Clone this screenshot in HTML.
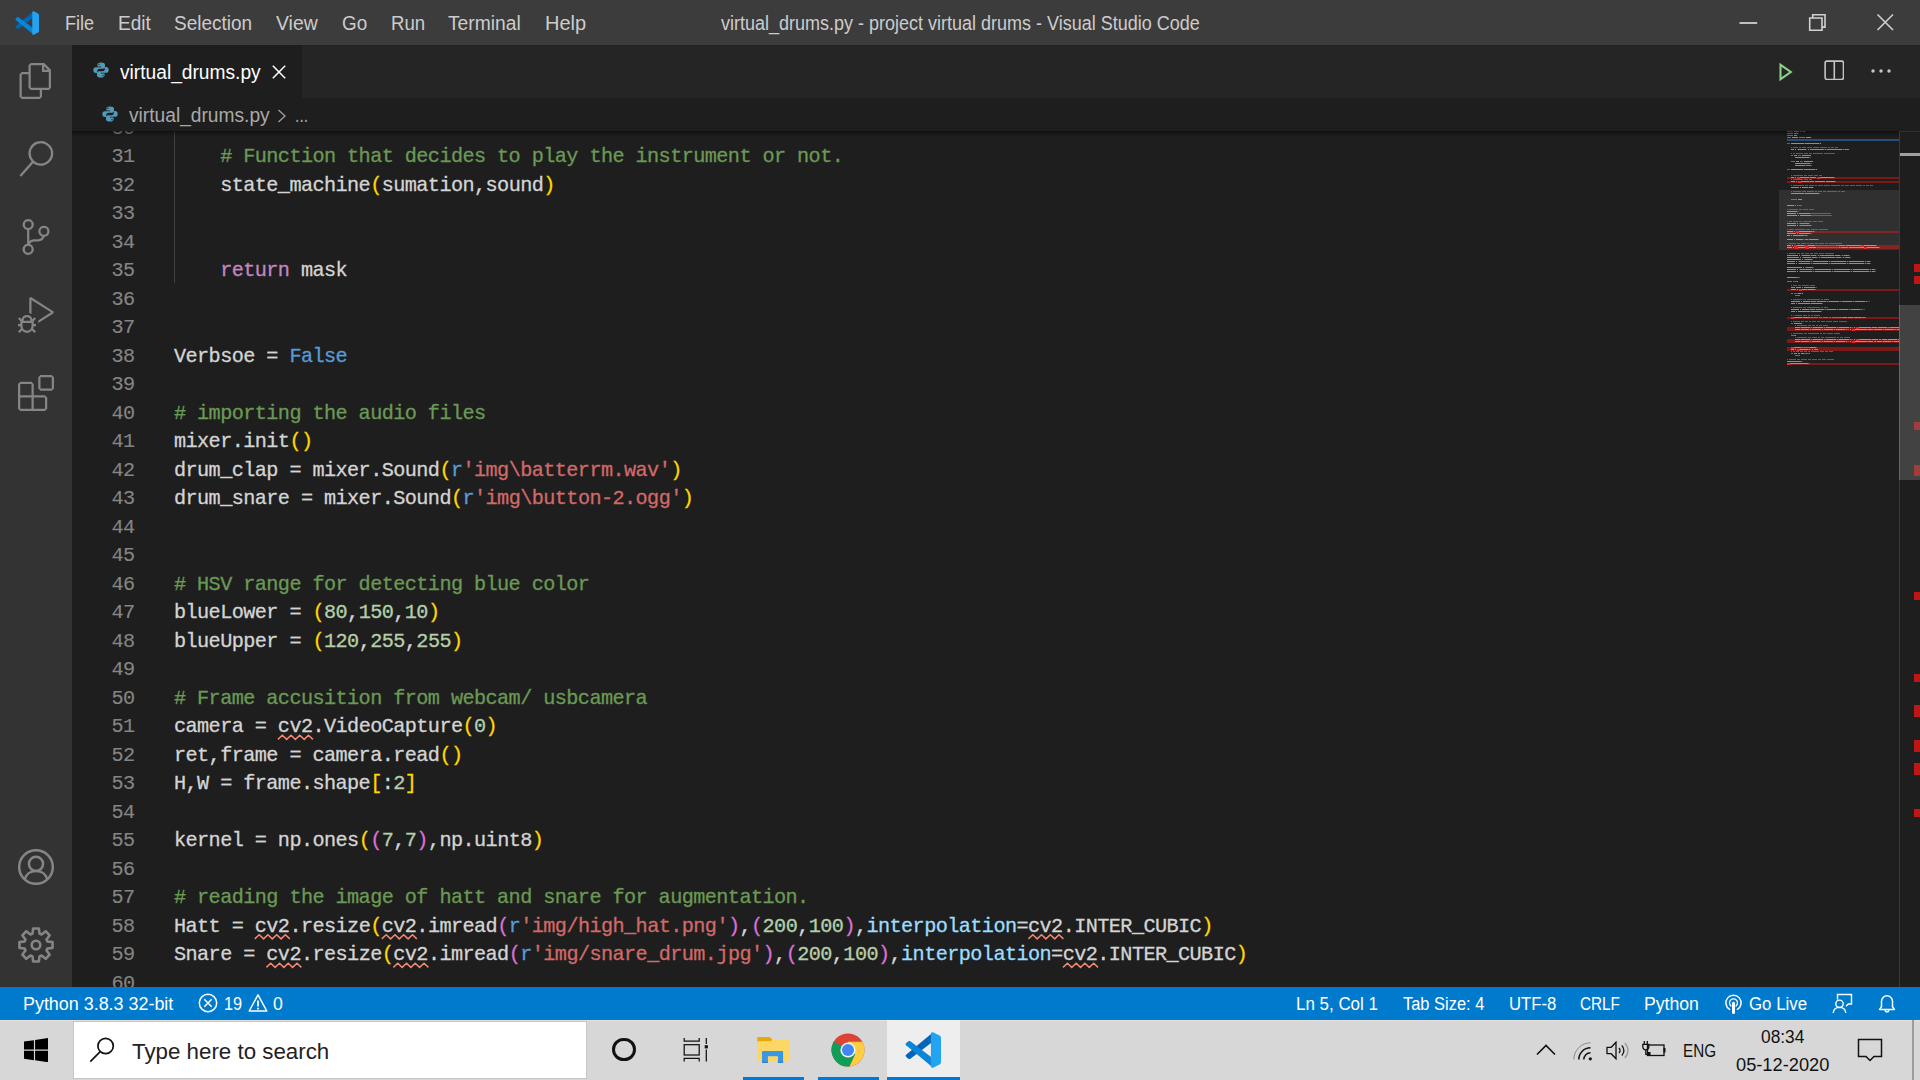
<!DOCTYPE html>
<html lang="en">
<head>
<meta charset="utf-8">
<title>virtual_drums.py - project virtual drums - Visual Studio Code</title>
<style>
*{box-sizing:border-box;margin:0;padding:0}
html,body{width:1920px;height:1080px;overflow:hidden;background:#1e1e1e}
body{position:relative;font-family:"Liberation Sans","DejaVu Sans",sans-serif;color:#ccc}
.abs{position:absolute}
.t{position:absolute;white-space:pre;line-height:1;transform-origin:0 0}
#titlebar{position:absolute;left:0;top:0;width:1920px;height:45px;background:#3c3c3c}
#activity{position:absolute;left:0;top:45px;width:72px;height:942px;background:#333}
#tabs{position:absolute;left:72px;top:45px;width:1848px;height:53px;background:#252526}
#tab{position:absolute;left:0;top:0;width:230px;height:53px;background:#1e1e1e}
#crumbs{position:absolute;left:72px;top:98px;width:1848px;height:33px;background:#1e1e1e}
#editor{position:absolute;left:72px;top:131px;width:1848px;height:856px;background:#1e1e1e;overflow:hidden}
#shadow{position:absolute;left:0;top:0;width:1827px;height:6px;box-shadow:#000 0 6px 6px -6px inset}
#status{position:absolute;left:0;top:987px;width:1920px;height:33px;background:#007acc;color:#fff}
#taskbar{position:absolute;left:0;top:1020px;width:1920px;height:60px;background:#d7d7d7;color:#000}
.ln{position:absolute;left:-72px;width:1860px;height:28.5px;line-height:28.5px;white-space:pre;
 font-family:"Liberation Mono","DejaVu Sans Mono",monospace;font-size:20.2px;letter-spacing:-0.576px;-webkit-text-stroke:0.3px;color:#d4d4d4}
.no{position:absolute;left:72px;width:62.5px;text-align:right;color:#858585;-webkit-text-stroke:0.12px}
.tx{position:absolute;left:174px}
.ai{position:absolute;left:18px;width:36px;height:36px;fill:#858585}
</style>
</head>
<body>
<!-- ================= TITLE BAR ================= -->
<div id="titlebar">
<svg class="abs" style="left:15px;top:11px" width="24" height="24" viewBox="0 0 100 100"><path d="M74 4 L3 63 Q0 66 3 69 L9 74 Q12 76 15 74 L76 28 Z" fill="#0066b8"/><path d="M74 96 L3 37 Q0 34 3 31 L9 26 Q12 24 15 26 L76 72 Z" fill="#0a84d8"/><path d="M72 3 Q74 0 78 1 L96 10 Q100 12 100 17 V83 Q100 88 96 90 L78 99 Q74 100 72 97 Z" fill="#23a4f0"/></svg><span class="t" style="left:64.8px;top:13.5px;font-size:19.5px;color:#cccccc;transform:scaleX(0.9255);">File</span><span class="t" style="left:118.1px;top:13.5px;font-size:19.5px;color:#cccccc;transform:scaleX(0.9754);">Edit</span><span class="t" style="left:174.4px;top:13.5px;font-size:19.5px;color:#cccccc;transform:scaleX(0.9746);">Selection</span><span class="t" style="left:276.4px;top:13.5px;font-size:19.5px;color:#cccccc;transform:scaleX(0.9943);">View</span><span class="t" style="left:341.9px;top:13.5px;font-size:19.5px;color:#cccccc;transform:scaleX(0.9680);">Go</span><span class="t" style="left:390.9px;top:13.5px;font-size:19.5px;color:#cccccc;transform:scaleX(0.9553);">Run</span><span class="t" style="left:448.4px;top:13.5px;font-size:19.5px;color:#cccccc;transform:scaleX(0.9864);">Terminal</span><span class="t" style="left:544.9px;top:13.5px;font-size:19.5px;color:#cccccc;transform:scaleX(1.0268);">Help</span><span class="t" style="left:720.5px;top:13.5px;font-size:19.5px;color:#cccccc;transform:scaleX(0.9227);">virtual_drums.py - project virtual drums - Visual Studio Code</span><svg class="abs" style="left:1720px;top:0" width="200" height="45" viewBox="0 0 200 45" fill="none" stroke="#d0d0d0" stroke-width="1.3"><path d="M19.500 23h17.700" stroke-width="1.800"/><path d="M89.700 18h12.300v12.300H89.700z M92.700 18v-3.200h12.300v12.300h-3" stroke-width="1.600"/><path d="M157.500 14.500l15.500 15.500M173 14.500l-15.500 15.500" stroke-width="1.6"/></svg>
</div>
<!-- ================= ACTIVITY BAR ================= -->
<div id="activity">
<svg class="ai" style="top:18px" viewBox="0 0 24 24"><path d="M17.500 0h-9L7 1.500V6H2.500L1 7.500v15.070L2.500 24h12.070L16 22.570V18h4.700l1.300-1.430V4.500L17.500 0zm0 2.120l2.380 2.380H17.500V2.120zm-3 20.380h-12v-15H7v9.070L8.500 18h6v4.500zm6-6h-12v-15H16V6h4.500v10.500z"/></svg><svg class="ai" style="top:96px" viewBox="0 0 24 24"><path d="M15.250 0a8.250 8.250 0 0 0-6.180 13.720L1 22.880l1.120 1 8.050-9.120A8.251 8.251 0 1 0 15.250.010V0zm0 15a6.750 6.750 0 1 1 0-13.500 6.750 6.750 0 0 1 0 13.500z"/></svg><svg class="ai" style="top:174px" viewBox="0 0 24 24"><path d="M21.007 8.222A3.738 3.738 0 0 0 15.045 5.200a3.737 3.737 0 0 0 1.156 6.583 2.988 2.988 0 0 1-2.668 1.670h-2.990a4.456 4.456 0 0 0-2.989 1.165V7.400a3.737 3.737 0 1 0-1.494 0v9.117a3.776 3.776 0 1 0 1.816.099 2.990 2.990 0 0 1 2.668-1.667h2.990a4.484 4.484 0 0 0 4.223-3.039 3.736 3.736 0 0 0 3.250-3.687zM4.565 3.738a2.242 2.242 0 1 1 4.484 0 2.242 2.242 0 0 1-4.484 0zm4.484 16.441a2.242 2.242 0 1 1-4.484 0 2.242 2.242 0 0 1 4.484 0zm8.221-9.715a2.242 2.242 0 1 1 0-4.485 2.242 2.242 0 0 1 0 4.485z"/></svg><svg class="ai" style="top:252px" viewBox="0 0 24 24"><path d="M10.940 13.500l-1.320 1.320a3.730 3.730 0 0 0-7.240 0L1.060 13.500 0 14.560l1.720 1.720-.22.220V18H0v1.500h1.500v.080c.077.489.214.966.410 1.420L0 22.940 1.060 24l1.650-1.650A4.308 4.308 0 0 0 6 24a4.310 4.310 0 0 0 3.290-1.650L10.940 24 12 22.940 10.090 21c.198-.464.336-.951.410-1.450v-.100H12V18h-1.500v-1.500l-.220-.220L12 14.560l-1.060-1.060zM6 13.500a2.250 2.250 0 0 1 2.250 2.250h-4.500A2.250 2.250 0 0 1 6 13.500zm3 6a3.330 3.330 0 0 1-3 3 3.330 3.330 0 0 1-3-3v-2.250h6v2.250zm14.760-9.900v1.260L13.500 17.370V15.600l8.500-5.370L9 2v9.460a5.070 5.070 0 0 0-1.500-.720V.630L8.640 0l15.120 9.600z"/></svg><svg class="ai" style="top:330px" viewBox="0 0 24 24"><path d="M13.500 1.500L15 0h7.500L24 1.500V9l-1.500 1.500H15L13.500 9V1.500zm1.500 0V9h7.500V1.500H15zM0 15V6l1.500-1.500H9L10.500 6v7.500H18l1.500 1.500v7.500L18 24H1.500L0 22.500V15zm9-1.500V6H1.500v7.500H9zM9 15H1.500v7.500H9V15zm1.500 7.500H18V15h-7.500v7.500z"/></svg><svg class="ai" style="top:804px;fill:none" viewBox="0 0 36 36" stroke="#858585" stroke-width="2.500"><circle cx="18" cy="18" r="16.800"/><circle cx="18" cy="14.800" r="7.100"/><path d="M6.600 30.300c1.400-5.200 5.900-8.400 11.400-8.400s10 3.200 11.400 8.400"/></svg><svg class="ai" style="top:882px;fill:none" viewBox="0 0 36 36" stroke="#858585" stroke-width="2.600" stroke-linejoin="round"><path d="M14.48 6.63 L15.16 1.44 L20.84 1.44 L21.52 6.63 L23.55 7.47 L27.70 4.28 L31.72 8.30 L28.53 12.45 L29.37 14.48 L34.56 15.16 L34.56 20.84 L29.37 21.52 L28.53 23.55 L31.72 27.70 L27.70 31.72 L23.55 28.53 L21.52 29.37 L20.84 34.56 L15.16 34.56 L14.48 29.37 L12.45 28.53 L8.30 31.72 L4.28 27.70 L7.47 23.55 L6.63 21.52 L1.44 20.84 L1.44 15.16 L6.63 14.48 L7.47 12.45 L4.28 8.30 L8.30 4.28 L12.45 7.47 Z"/><circle cx="18" cy="18" r="4.300"/></svg>
</div>
<!-- ================= TABS ================= -->
<div id="tabs">
<div id="tab"></div>
<svg class="abs" style="left:20.799999999999997px;top:16.5px" width="16" height="16" viewBox="0 0 16 16"><g fill="#519aba"><path d="M7.9.4C5.6.4 4.4 1.1 4.4 2.7v1.9h3.7v.6H2.9C1.2 5.2.3 6.3.3 8.1s.9 2.9 2.6 2.9h1.3V9c0-1.3 1.100-2.300 2.400-2.300h3.500c1.100 0 1.900-.9 1.900-2V2.700C12 1.100 10.600.4 7.900.4zM6 1.600a.7.7 0 110 1.400.7.7 0 010-1.400z"/><path d="M8.100 15.600c2.300 0 3.500-.7 3.500-2.300v-1.900H7.900v-.6h5.200c1.700 0 2.600-1.100 2.600-2.900s-.9-2.900-2.600-2.900h-1.300V7c0 1.300-1.100 2.300-2.400 2.300H5.900C4.800 9.300 4 10.200 4 11.300v2c0 1.600 1.400 2.300 4.100 2.300zm1.900-1.200a.7.7 0 110-1.400.7.7 0 010 1.400z"/></g></svg><span class="t" style="left:47.7px;top:17.5px;font-size:19.5px;color:#ffffff;transform:scaleX(0.9834);">virtual_drums.py</span><svg class="abs" style="left:200.3px;top:19.700000000000003px" width="14" height="14" viewBox="0 0 14 14" stroke="#fff" stroke-width="1.500" fill="none"><path d="M.8.8l12.400 12.400M13.200.8L.8 13.200"/></svg><svg class="abs" style="left:1705.7px;top:17px" width="18" height="20" viewBox="0 0 18 20" fill="none" stroke="#89d185" stroke-width="2.100" stroke-linejoin="miter"><path d="M2.500 2.800v14.400l10.300-7.200z"/></svg><svg class="abs" style="left:1751.5px;top:14.799999999999997px" width="20.600" height="20.600" viewBox="0 0 22 22" fill="none" stroke="#c5c5c5" stroke-width="1.700"><rect x="1.200" y="1.200" width="19.600" height="19.600" rx="2"/><path d="M11 1.200v19.600"/></svg><svg class="abs" style="left:1798px;top:23px" width="22" height="6" viewBox="0 0 22 6" fill="#c5c5c5"><circle cx="3" cy="3" r="1.700"/><circle cx="11" cy="3" r="1.700"/><circle cx="19" cy="3" r="1.700"/></svg>
</div>
<div id="crumbs">
<svg class="abs" style="left:29.700000000000003px;top:7.700000000000003px" width="16" height="16" viewBox="0 0 16 16"><g fill="#519aba"><path d="M7.9.4C5.6.4 4.4 1.1 4.4 2.7v1.9h3.7v.6H2.9C1.2 5.2.3 6.3.3 8.1s.9 2.9 2.6 2.9h1.3V9c0-1.3 1.100-2.300 2.400-2.300h3.500c1.100 0 1.900-.9 1.900-2V2.700C12 1.100 10.600.4 7.900.4zM6 1.600a.7.7 0 110 1.400.7.7 0 010-1.400z"/><path d="M8.100 15.600c2.300 0 3.500-.7 3.500-2.300v-1.900H7.900v-.6h5.200c1.700 0 2.600-1.100 2.600-2.900s-.9-2.900-2.600-2.900h-1.300V7c0 1.300-1.100 2.300-2.400 2.300H5.900C4.800 9.300 4 10.200 4 11.300v2c0 1.600 1.400 2.300 4.100 2.300zm1.900-1.200a.7.7 0 110-1.400.7.7 0 010 1.400z"/></g></svg><span class="t" style="left:56.6px;top:7.9px;font-size:19.5px;color:#a9a9a9;transform:scaleX(0.9834);">virtual_drums.py</span><svg class="abs" style="left:205.2px;top:10.700000000000003px" width="10" height="14" viewBox="0 0 10 14" fill="none" stroke="#a0a0a0" stroke-width="1.300"><path d="M1.500 1l6.500 6-6.500 6"/></svg><span class="t" style="left:222.5px;top:7.9px;font-size:19.5px;color:#a9a9a9;transform:scaleX(0.8105);">...</span>
</div>
<!-- ================= EDITOR ================= -->
<div id="editor">
<div class="abs" style="left:102px;top:0;width:1px;height:152px;background:#404040"></div>
<div id="code" class="abs" style="left:0;top:-131px;width:1780px;height:1080px">
<div class="ln" style="top:114.85px"><span class="no">30</span><span class="tx"></span></div>
<div class="ln" style="top:143.35px"><span class="no">31</span><span class="tx">    <span style="color:#6a9955"># Function that decides to play the instrument or not.</span></span></div>
<div class="ln" style="top:171.85px"><span class="no">32</span><span class="tx">    state_machine<span style="color:#ffd700">(</span>sumation,sound<span style="color:#ffd700">)</span></span></div>
<div class="ln" style="top:200.35px"><span class="no">33</span><span class="tx"></span></div>
<div class="ln" style="top:228.85px"><span class="no">34</span><span class="tx"></span></div>
<div class="ln" style="top:257.35px"><span class="no">35</span><span class="tx">    <span style="color:#c586c0">return</span> mask</span></div>
<div class="ln" style="top:285.85px"><span class="no">36</span><span class="tx"></span></div>
<div class="ln" style="top:314.35px"><span class="no">37</span><span class="tx"></span></div>
<div class="ln" style="top:342.85px"><span class="no">38</span><span class="tx">Verbsoe = <span style="color:#569cd6">False</span></span></div>
<div class="ln" style="top:371.35px"><span class="no">39</span><span class="tx"></span></div>
<div class="ln" style="top:399.85px"><span class="no">40</span><span class="tx"><span style="color:#6a9955"># importing the audio files</span></span></div>
<div class="ln" style="top:428.35px"><span class="no">41</span><span class="tx">mixer.init<span style="color:#ffd700">()</span></span></div>
<div class="ln" style="top:456.85px"><span class="no">42</span><span class="tx">drum_clap = mixer.Sound<span style="color:#ffd700">(</span><span style="color:#569cd6">r</span><span style="color:#d16969">'img\batterrm.wav'</span><span style="color:#ffd700">)</span></span></div>
<div class="ln" style="top:485.35px"><span class="no">43</span><span class="tx">drum_snare = mixer.Sound<span style="color:#ffd700">(</span><span style="color:#569cd6">r</span><span style="color:#d16969">'img\button-2.ogg'</span><span style="color:#ffd700">)</span></span></div>
<div class="ln" style="top:513.85px"><span class="no">44</span><span class="tx"></span></div>
<div class="ln" style="top:542.35px"><span class="no">45</span><span class="tx"></span></div>
<div class="ln" style="top:570.85px"><span class="no">46</span><span class="tx"><span style="color:#6a9955"># HSV range for detecting blue color</span></span></div>
<div class="ln" style="top:599.35px"><span class="no">47</span><span class="tx">blueLower = <span style="color:#ffd700">(</span><span style="color:#b5cea8">80</span>,<span style="color:#b5cea8">150</span>,<span style="color:#b5cea8">10</span><span style="color:#ffd700">)</span></span></div>
<div class="ln" style="top:627.85px"><span class="no">48</span><span class="tx">blueUpper = <span style="color:#ffd700">(</span><span style="color:#b5cea8">120</span>,<span style="color:#b5cea8">255</span>,<span style="color:#b5cea8">255</span><span style="color:#ffd700">)</span></span></div>
<div class="ln" style="top:656.35px"><span class="no">49</span><span class="tx"></span></div>
<div class="ln" style="top:684.85px"><span class="no">50</span><span class="tx"><span style="color:#6a9955"># Frame accusition from webcam/ usbcamera</span></span></div>
<div class="ln" style="top:713.35px"><span class="no">51</span><span class="tx">camera = <span class="er" style="color:#d4d4d4">cv2</span>.VideoCapture<span style="color:#ffd700">(</span><span style="color:#b5cea8">0</span><span style="color:#ffd700">)</span></span></div>
<div class="ln" style="top:741.85px"><span class="no">52</span><span class="tx">ret,frame = camera.read<span style="color:#ffd700">()</span></span></div>
<div class="ln" style="top:770.35px"><span class="no">53</span><span class="tx">H,W = frame.shape<span style="color:#ffd700">[</span>:<span style="color:#b5cea8">2</span><span style="color:#ffd700">]</span></span></div>
<div class="ln" style="top:798.85px"><span class="no">54</span><span class="tx"></span></div>
<div class="ln" style="top:827.35px"><span class="no">55</span><span class="tx">kernel = np.ones<span style="color:#ffd700">(</span><span style="color:#da70d6">(</span><span style="color:#b5cea8">7</span>,<span style="color:#b5cea8">7</span><span style="color:#da70d6">)</span>,np.uint8<span style="color:#ffd700">)</span></span></div>
<div class="ln" style="top:855.85px"><span class="no">56</span><span class="tx"></span></div>
<div class="ln" style="top:884.35px"><span class="no">57</span><span class="tx"><span style="color:#6a9955"># reading the image of hatt and snare for augmentation.</span></span></div>
<div class="ln" style="top:912.85px"><span class="no">58</span><span class="tx">Hatt = <span class="er" style="color:#d4d4d4">cv2</span>.resize<span style="color:#ffd700">(</span><span class="er" style="color:#d4d4d4">cv2</span>.imread<span style="color:#da70d6">(</span><span style="color:#569cd6">r</span><span style="color:#d16969">'img/high_hat.png'</span><span style="color:#da70d6">)</span>,<span style="color:#da70d6">(</span><span style="color:#b5cea8">200</span>,<span style="color:#b5cea8">100</span><span style="color:#da70d6">)</span>,<span style="color:#9cdcfe">interpolation</span>=<span class="er" style="color:#d4d4d4">cv2</span>.INTER_CUBIC<span style="color:#ffd700">)</span></span></div>
<div class="ln" style="top:941.35px"><span class="no">59</span><span class="tx">Snare = <span class="er" style="color:#d4d4d4">cv2</span>.resize<span style="color:#ffd700">(</span><span class="er" style="color:#d4d4d4">cv2</span>.imread<span style="color:#da70d6">(</span><span style="color:#569cd6">r</span><span style="color:#d16969">'img/snare_drum.jpg'</span><span style="color:#da70d6">)</span>,<span style="color:#da70d6">(</span><span style="color:#b5cea8">200</span>,<span style="color:#b5cea8">100</span><span style="color:#da70d6">)</span>,<span style="color:#9cdcfe">interpolation</span>=<span class="er" style="color:#d4d4d4">cv2</span>.INTER_CUBIC<span style="color:#ffd700">)</span></span></div>
<div class="ln" style="top:969.85px"><span class="no">60</span><span class="tx"></span></div>
<svg class="abs" style="left:-72px;top:0" width="1780" height="1080" viewBox="0 0 1780 1080" fill="none" stroke="#f48771" stroke-width="1.500" stroke-linejoin="miter"><path d="M277.9 739.4 L282.3 735.2 L286.7 739.4 L291.0 735.2 L295.4 739.4 L299.8 735.2 L304.2 739.4 L308.5 735.2 L312.9 739.4"/><path d="M254.8 938.9 L259.2 934.7 L263.6 938.9 L267.9 934.7 L272.3 938.9 L276.7 934.7 L281.1 938.9 L285.4 934.7 L289.8 938.9"/><path d="M381.8 938.9 L386.2 934.7 L390.6 938.9 L395.0 934.7 L399.3 938.9 L403.7 934.7 L408.1 938.9 L412.5 934.7 L416.8 938.9"/><path d="M1028.4 938.9 L1032.8 934.7 L1037.2 938.9 L1041.5 934.7 L1045.9 938.9 L1050.3 934.7 L1054.7 938.9 L1059.0 934.7 L1063.4 938.9"/><path d="M266.4 967.4 L270.7 963.2 L275.1 967.4 L279.5 963.2 L283.9 967.4 L288.2 963.2 L292.6 967.4 L297.0 963.2 L301.4 967.4"/><path d="M393.4 967.4 L397.7 963.2 L402.1 967.4 L406.5 963.2 L410.9 967.4 L415.2 963.2 L419.6 967.4 L424.0 963.2 L428.4 967.4"/><path d="M1063.0 967.4 L1067.4 963.2 L1071.8 967.4 L1076.2 963.2 L1080.5 967.4 L1084.9 963.2 L1089.3 967.4 L1093.7 963.2 L1098.0 967.4"/></svg>
</div>
<!-- minimap -->
<svg class="abs" style="left:1707px;top:0" width="120" height="856" viewBox="0 0 120 856" shape-rendering="crispEdges">
<rect x="0" y="59" width="120" height="60" fill="#797979" fill-opacity=".2"/>
<rect x="8" y="7.5" width="112" height="2" fill="#264f78"/>
<rect x="8" y="-0.3" width="6" height="1.6" fill="#c586c0" fill-opacity=".62"/>
<rect x="15" y="-0.3" width="5" height="1.6" fill="#d4d4d4" fill-opacity=".62"/>
<rect x="21" y="-0.3" width="2" height="1.6" fill="#c586c0" fill-opacity=".62"/>
<rect x="24" y="-0.3" width="2" height="1.6" fill="#d4d4d4" fill-opacity=".62"/>
<rect x="8" y="1.7" width="6" height="1.6" fill="#c586c0" fill-opacity=".62"/>
<rect x="15" y="1.7" width="4" height="1.6" fill="#d4d4d4" fill-opacity=".62"/>
<rect x="8" y="3.7" width="6" height="1.6" fill="#c586c0" fill-opacity=".62"/>
<rect x="15" y="3.7" width="3" height="1.6" fill="#d4d4d4" fill-opacity=".62"/>
<rect x="8" y="5.7" width="4" height="1.6" fill="#c586c0" fill-opacity=".62"/>
<rect x="13" y="5.7" width="6" height="1.6" fill="#d4d4d4" fill-opacity=".62"/>
<rect x="20" y="5.7" width="6" height="1.6" fill="#c586c0" fill-opacity=".62"/>
<rect x="27" y="5.7" width="5" height="1.6" fill="#d4d4d4" fill-opacity=".62"/>
<rect x="8" y="11.7" width="3" height="1.6" fill="#569cd6" fill-opacity=".62"/>
<rect x="12" y="11.7" width="13" height="1.6" fill="#dcdcaa" fill-opacity=".62"/>
<rect x="25" y="11.7" width="1" height="1.6" fill="#ffd700" fill-opacity=".3"/>
<rect x="26" y="11.7" width="8" height="1.6" fill="#9cdcfe" fill-opacity=".62"/>
<rect x="34" y="11.7" width="1" height="1.6" fill="#d4d4d4" fill-opacity=".62"/>
<rect x="35" y="11.7" width="5" height="1.6" fill="#9cdcfe" fill-opacity=".62"/>
<rect x="40" y="11.7" width="1" height="1.6" fill="#ffd700" fill-opacity=".3"/>
<rect x="41" y="11.7" width="1" height="1.6" fill="#d4d4d4" fill-opacity=".62"/>
<rect x="12" y="15.7" width="1" height="1.6" fill="#6a9955" fill-opacity=".62"/>
<rect x="14" y="15.7" width="5" height="1.6" fill="#6a9955" fill-opacity=".62"/>
<rect x="20" y="15.7" width="2" height="1.6" fill="#6a9955" fill-opacity=".62"/>
<rect x="23" y="15.7" width="4" height="1.6" fill="#6a9955" fill-opacity=".62"/>
<rect x="28" y="15.7" width="5" height="1.6" fill="#6a9955" fill-opacity=".62"/>
<rect x="34" y="15.7" width="6" height="1.6" fill="#6a9955" fill-opacity=".62"/>
<rect x="41" y="15.7" width="7" height="1.6" fill="#6a9955" fill-opacity=".62"/>
<rect x="49" y="15.7" width="2" height="1.6" fill="#6a9955" fill-opacity=".62"/>
<rect x="52" y="15.7" width="3" height="1.6" fill="#6a9955" fill-opacity=".62"/>
<rect x="56" y="15.7" width="3" height="1.6" fill="#6a9955" fill-opacity=".62"/>
<rect x="12" y="17.7" width="3" height="1.6" fill="#d4d4d4" fill-opacity=".62"/>
<rect x="16" y="17.7" width="1" height="1.6" fill="#d4d4d4" fill-opacity=".62"/>
<rect x="18" y="17.7" width="1" height="1.6" fill="#ffd700" fill-opacity=".3"/>
<rect x="19" y="17.7" width="8" height="1.6" fill="#d4d4d4" fill-opacity=".62"/>
<rect x="27" y="17.7" width="1" height="1.6" fill="#ffd700" fill-opacity=".3"/>
<rect x="29" y="17.7" width="1" height="1.6" fill="#d4d4d4" fill-opacity=".62"/>
<rect x="31" y="17.7" width="14" height="1.6" fill="#d4d4d4" fill-opacity=".62"/>
<rect x="45" y="17.7" width="1" height="1.6" fill="#ffd700" fill-opacity=".3"/>
<rect x="46" y="17.7" width="1" height="1.6" fill="#b5cea8" fill-opacity=".62"/>
<rect x="47" y="17.7" width="1" height="1.6" fill="#ffd700" fill-opacity=".3"/>
<rect x="48" y="17.7" width="15" height="1.6" fill="#d4d4d4" fill-opacity=".62"/>
<rect x="63" y="17.7" width="1" height="1.6" fill="#ffd700" fill-opacity=".3"/>
<rect x="64" y="17.7" width="1" height="1.6" fill="#b5cea8" fill-opacity=".62"/>
<rect x="65" y="17.7" width="1" height="1.6" fill="#ffd700" fill-opacity=".3"/>
<rect x="66" y="17.7" width="1" height="1.6" fill="#d4d4d4" fill-opacity=".62"/>
<rect x="67" y="17.7" width="3" height="1.6" fill="#b5cea8" fill-opacity=".62"/>
<rect x="12" y="21.7" width="1" height="1.6" fill="#6a9955" fill-opacity=".62"/>
<rect x="14" y="21.7" width="2" height="1.6" fill="#6a9955" fill-opacity=".62"/>
<rect x="17" y="21.7" width="7" height="1.6" fill="#6a9955" fill-opacity=".62"/>
<rect x="25" y="21.7" width="4" height="1.6" fill="#6a9955" fill-opacity=".62"/>
<rect x="30" y="21.7" width="3" height="1.6" fill="#6a9955" fill-opacity=".62"/>
<rect x="34" y="21.7" width="10" height="1.6" fill="#6a9955" fill-opacity=".62"/>
<rect x="45" y="21.7" width="11" height="1.6" fill="#6a9955" fill-opacity=".62"/>
<rect x="12" y="23.7" width="2" height="1.6" fill="#c586c0" fill-opacity=".62"/>
<rect x="15" y="23.7" width="3" height="1.6" fill="#d4d4d4" fill-opacity=".62"/>
<rect x="19" y="23.7" width="3" height="1.6" fill="#569cd6" fill-opacity=".62"/>
<rect x="23" y="23.7" width="7" height="1.6" fill="#d4d4d4" fill-opacity=".62"/>
<rect x="30" y="23.7" width="1" height="1.6" fill="#b5cea8" fill-opacity=".62"/>
<rect x="31" y="23.7" width="1" height="1.6" fill="#d4d4d4" fill-opacity=".62"/>
<rect x="16" y="25.7" width="14" height="1.6" fill="#d4d4d4" fill-opacity=".62"/>
<rect x="30" y="25.7" width="2" height="1.6" fill="#ffd700" fill-opacity=".3"/>
<rect x="12" y="29.7" width="4" height="1.6" fill="#c586c0" fill-opacity=".62"/>
<rect x="17" y="29.7" width="3" height="1.6" fill="#d4d4d4" fill-opacity=".62"/>
<rect x="21" y="29.7" width="3" height="1.6" fill="#569cd6" fill-opacity=".62"/>
<rect x="25" y="29.7" width="7" height="1.6" fill="#d4d4d4" fill-opacity=".62"/>
<rect x="32" y="29.7" width="1" height="1.6" fill="#b5cea8" fill-opacity=".62"/>
<rect x="33" y="29.7" width="1" height="1.6" fill="#d4d4d4" fill-opacity=".62"/>
<rect x="16" y="31.7" width="15" height="1.6" fill="#d4d4d4" fill-opacity=".62"/>
<rect x="31" y="31.7" width="2" height="1.6" fill="#ffd700" fill-opacity=".3"/>
<rect x="16" y="33.7" width="10" height="1.6" fill="#d4d4d4" fill-opacity=".62"/>
<rect x="26" y="33.7" width="1" height="1.6" fill="#ffd700" fill-opacity=".3"/>
<rect x="27" y="33.7" width="5" height="1.6" fill="#b5cea8" fill-opacity=".62"/>
<rect x="32" y="33.7" width="1" height="1.6" fill="#ffd700" fill-opacity=".3"/>
<rect x="8" y="37.7" width="3" height="1.6" fill="#569cd6" fill-opacity=".62"/>
<rect x="12" y="37.7" width="12" height="1.6" fill="#dcdcaa" fill-opacity=".62"/>
<rect x="24" y="37.7" width="1" height="1.6" fill="#ffd700" fill-opacity=".3"/>
<rect x="25" y="37.7" width="5" height="1.6" fill="#9cdcfe" fill-opacity=".62"/>
<rect x="30" y="37.7" width="1" height="1.6" fill="#d4d4d4" fill-opacity=".62"/>
<rect x="31" y="37.7" width="5" height="1.6" fill="#9cdcfe" fill-opacity=".62"/>
<rect x="36" y="37.7" width="1" height="1.6" fill="#ffd700" fill-opacity=".3"/>
<rect x="37" y="37.7" width="1" height="1.6" fill="#d4d4d4" fill-opacity=".62"/>
<rect x="12" y="43.7" width="1" height="1.6" fill="#6a9955" fill-opacity=".62"/>
<rect x="14" y="43.7" width="10" height="1.6" fill="#6a9955" fill-opacity=".62"/>
<rect x="25" y="43.7" width="3" height="1.6" fill="#6a9955" fill-opacity=".62"/>
<rect x="29" y="43.7" width="5" height="1.6" fill="#6a9955" fill-opacity=".62"/>
<rect x="35" y="43.7" width="4" height="1.6" fill="#6a9955" fill-opacity=".62"/>
<rect x="40" y="43.7" width="3" height="1.6" fill="#6a9955" fill-opacity=".62"/>
<rect x="8" y="45.5" width="112" height="2" fill="#ff1212" fill-opacity=".42"/>
<rect x="12" y="45.7" width="3" height="1.6" fill="#d4d4d4" fill-opacity=".62"/>
<rect x="16" y="45.7" width="1" height="1.6" fill="#d4d4d4" fill-opacity=".62"/>
<rect x="18" y="45.5" width="3" height="2" fill="#ff1e1e"/>
<rect x="21" y="45.7" width="9" height="1.6" fill="#d4d4d4" fill-opacity=".62"/>
<rect x="30" y="45.7" width="1" height="1.6" fill="#ffd700" fill-opacity=".3"/>
<rect x="31" y="45.7" width="6" height="1.6" fill="#d4d4d4" fill-opacity=".62"/>
<rect x="38" y="45.5" width="3" height="2" fill="#ff1e1e"/>
<rect x="41" y="45.7" width="14" height="1.6" fill="#d4d4d4" fill-opacity=".62"/>
<rect x="55" y="45.7" width="1" height="1.6" fill="#ffd700" fill-opacity=".3"/>
<rect x="12" y="47.7" width="1" height="1.6" fill="#6a9955" fill-opacity=".62"/>
<rect x="14" y="47.7" width="10" height="1.6" fill="#6a9955" fill-opacity=".62"/>
<rect x="25" y="47.7" width="4" height="1.6" fill="#6a9955" fill-opacity=".62"/>
<rect x="30" y="47.7" width="3" height="1.6" fill="#6a9955" fill-opacity=".62"/>
<rect x="8" y="49.5" width="112" height="2" fill="#ff1212" fill-opacity=".42"/>
<rect x="12" y="49.7" width="4" height="1.6" fill="#d4d4d4" fill-opacity=".62"/>
<rect x="17" y="49.7" width="1" height="1.6" fill="#d4d4d4" fill-opacity=".62"/>
<rect x="19" y="49.5" width="3" height="2" fill="#ff1e1e"/>
<rect x="22" y="49.7" width="8" height="1.6" fill="#d4d4d4" fill-opacity=".62"/>
<rect x="30" y="49.7" width="1" height="1.6" fill="#ffd700" fill-opacity=".3"/>
<rect x="31" y="49.7" width="4" height="1.6" fill="#d4d4d4" fill-opacity=".62"/>
<rect x="36" y="49.7" width="10" height="1.6" fill="#d4d4d4" fill-opacity=".62"/>
<rect x="47" y="49.7" width="9" height="1.6" fill="#d4d4d4" fill-opacity=".62"/>
<rect x="56" y="49.7" width="1" height="1.6" fill="#ffd700" fill-opacity=".3"/>
<rect x="12" y="53.7" width="1" height="1.6" fill="#6a9955" fill-opacity=".62"/>
<rect x="14" y="53.7" width="11" height="1.6" fill="#6a9955" fill-opacity=".62"/>
<rect x="26" y="53.7" width="3" height="1.6" fill="#6a9955" fill-opacity=".62"/>
<rect x="30" y="53.7" width="5" height="1.6" fill="#6a9955" fill-opacity=".62"/>
<rect x="36" y="53.7" width="2" height="1.6" fill="#6a9955" fill-opacity=".62"/>
<rect x="39" y="53.7" width="5" height="1.6" fill="#6a9955" fill-opacity=".62"/>
<rect x="45" y="53.7" width="6" height="1.6" fill="#6a9955" fill-opacity=".62"/>
<rect x="52" y="53.7" width="9" height="1.6" fill="#6a9955" fill-opacity=".62"/>
<rect x="62" y="53.7" width="3" height="1.6" fill="#6a9955" fill-opacity=".62"/>
<rect x="66" y="53.7" width="4" height="1.6" fill="#6a9955" fill-opacity=".62"/>
<rect x="71" y="53.7" width="5" height="1.6" fill="#6a9955" fill-opacity=".62"/>
<rect x="77" y="53.7" width="6" height="1.6" fill="#6a9955" fill-opacity=".62"/>
<rect x="84" y="53.7" width="2" height="1.6" fill="#6a9955" fill-opacity=".62"/>
<rect x="87" y="53.7" width="3" height="1.6" fill="#6a9955" fill-opacity=".62"/>
<rect x="91" y="53.7" width="3" height="1.6" fill="#6a9955" fill-opacity=".62"/>
<rect x="12" y="55.7" width="8" height="1.6" fill="#d4d4d4" fill-opacity=".62"/>
<rect x="21" y="55.7" width="1" height="1.6" fill="#d4d4d4" fill-opacity=".62"/>
<rect x="23" y="55.7" width="6" height="1.6" fill="#d4d4d4" fill-opacity=".62"/>
<rect x="29" y="55.7" width="1" height="1.6" fill="#ffd700" fill-opacity=".3"/>
<rect x="30" y="55.7" width="4" height="1.6" fill="#d4d4d4" fill-opacity=".62"/>
<rect x="34" y="55.7" width="1" height="1.6" fill="#ffd700" fill-opacity=".3"/>
<rect x="12" y="59.7" width="1" height="1.6" fill="#6a9955" fill-opacity=".62"/>
<rect x="14" y="59.7" width="8" height="1.6" fill="#6a9955" fill-opacity=".62"/>
<rect x="23" y="59.7" width="4" height="1.6" fill="#6a9955" fill-opacity=".62"/>
<rect x="28" y="59.7" width="7" height="1.6" fill="#6a9955" fill-opacity=".62"/>
<rect x="36" y="59.7" width="2" height="1.6" fill="#6a9955" fill-opacity=".62"/>
<rect x="39" y="59.7" width="4" height="1.6" fill="#6a9955" fill-opacity=".62"/>
<rect x="44" y="59.7" width="3" height="1.6" fill="#6a9955" fill-opacity=".62"/>
<rect x="48" y="59.7" width="10" height="1.6" fill="#6a9955" fill-opacity=".62"/>
<rect x="59" y="59.7" width="2" height="1.6" fill="#6a9955" fill-opacity=".62"/>
<rect x="62" y="59.7" width="4" height="1.6" fill="#6a9955" fill-opacity=".62"/>
<rect x="12" y="61.7" width="13" height="1.6" fill="#d4d4d4" fill-opacity=".62"/>
<rect x="25" y="61.7" width="1" height="1.6" fill="#ffd700" fill-opacity=".3"/>
<rect x="26" y="61.7" width="14" height="1.6" fill="#d4d4d4" fill-opacity=".62"/>
<rect x="40" y="61.7" width="1" height="1.6" fill="#ffd700" fill-opacity=".3"/>
<rect x="12" y="67.7" width="6" height="1.6" fill="#c586c0" fill-opacity=".62"/>
<rect x="19" y="67.7" width="4" height="1.6" fill="#d4d4d4" fill-opacity=".62"/>
<rect x="8" y="73.7" width="7" height="1.6" fill="#d4d4d4" fill-opacity=".62"/>
<rect x="16" y="73.7" width="1" height="1.6" fill="#d4d4d4" fill-opacity=".62"/>
<rect x="18" y="73.7" width="5" height="1.6" fill="#569cd6" fill-opacity=".62"/>
<rect x="8" y="77.7" width="1" height="1.6" fill="#6a9955" fill-opacity=".62"/>
<rect x="10" y="77.7" width="9" height="1.6" fill="#6a9955" fill-opacity=".62"/>
<rect x="20" y="77.7" width="3" height="1.6" fill="#6a9955" fill-opacity=".62"/>
<rect x="24" y="77.7" width="5" height="1.6" fill="#6a9955" fill-opacity=".62"/>
<rect x="30" y="77.7" width="5" height="1.6" fill="#6a9955" fill-opacity=".62"/>
<rect x="8" y="79.7" width="10" height="1.6" fill="#d4d4d4" fill-opacity=".62"/>
<rect x="18" y="79.7" width="2" height="1.6" fill="#ffd700" fill-opacity=".3"/>
<rect x="8" y="81.7" width="9" height="1.6" fill="#d4d4d4" fill-opacity=".62"/>
<rect x="18" y="81.7" width="1" height="1.6" fill="#d4d4d4" fill-opacity=".62"/>
<rect x="20" y="81.7" width="11" height="1.6" fill="#d4d4d4" fill-opacity=".62"/>
<rect x="31" y="81.7" width="1" height="1.6" fill="#ffd700" fill-opacity=".3"/>
<rect x="32" y="81.7" width="1" height="1.6" fill="#569cd6" fill-opacity=".62"/>
<rect x="33" y="81.7" width="18" height="1.6" fill="#d16969" fill-opacity=".62"/>
<rect x="51" y="81.7" width="1" height="1.6" fill="#ffd700" fill-opacity=".3"/>
<rect x="8" y="83.7" width="10" height="1.6" fill="#d4d4d4" fill-opacity=".62"/>
<rect x="19" y="83.7" width="1" height="1.6" fill="#d4d4d4" fill-opacity=".62"/>
<rect x="21" y="83.7" width="11" height="1.6" fill="#d4d4d4" fill-opacity=".62"/>
<rect x="32" y="83.7" width="1" height="1.6" fill="#ffd700" fill-opacity=".3"/>
<rect x="33" y="83.7" width="1" height="1.6" fill="#569cd6" fill-opacity=".62"/>
<rect x="34" y="83.7" width="18" height="1.6" fill="#d16969" fill-opacity=".62"/>
<rect x="52" y="83.7" width="1" height="1.6" fill="#ffd700" fill-opacity=".3"/>
<rect x="8" y="89.7" width="1" height="1.6" fill="#6a9955" fill-opacity=".62"/>
<rect x="10" y="89.7" width="3" height="1.6" fill="#6a9955" fill-opacity=".62"/>
<rect x="14" y="89.7" width="5" height="1.6" fill="#6a9955" fill-opacity=".62"/>
<rect x="20" y="89.7" width="3" height="1.6" fill="#6a9955" fill-opacity=".62"/>
<rect x="24" y="89.7" width="9" height="1.6" fill="#6a9955" fill-opacity=".62"/>
<rect x="34" y="89.7" width="4" height="1.6" fill="#6a9955" fill-opacity=".62"/>
<rect x="39" y="89.7" width="5" height="1.6" fill="#6a9955" fill-opacity=".62"/>
<rect x="8" y="91.7" width="9" height="1.6" fill="#d4d4d4" fill-opacity=".62"/>
<rect x="18" y="91.7" width="1" height="1.6" fill="#d4d4d4" fill-opacity=".62"/>
<rect x="20" y="91.7" width="1" height="1.6" fill="#ffd700" fill-opacity=".3"/>
<rect x="21" y="91.7" width="2" height="1.6" fill="#b5cea8" fill-opacity=".62"/>
<rect x="23" y="91.7" width="1" height="1.6" fill="#d4d4d4" fill-opacity=".62"/>
<rect x="24" y="91.7" width="3" height="1.6" fill="#b5cea8" fill-opacity=".62"/>
<rect x="27" y="91.7" width="1" height="1.6" fill="#d4d4d4" fill-opacity=".62"/>
<rect x="28" y="91.7" width="2" height="1.6" fill="#b5cea8" fill-opacity=".62"/>
<rect x="30" y="91.7" width="1" height="1.6" fill="#ffd700" fill-opacity=".3"/>
<rect x="8" y="93.7" width="9" height="1.6" fill="#d4d4d4" fill-opacity=".62"/>
<rect x="18" y="93.7" width="1" height="1.6" fill="#d4d4d4" fill-opacity=".62"/>
<rect x="20" y="93.7" width="1" height="1.6" fill="#ffd700" fill-opacity=".3"/>
<rect x="21" y="93.7" width="3" height="1.6" fill="#b5cea8" fill-opacity=".62"/>
<rect x="24" y="93.7" width="1" height="1.6" fill="#d4d4d4" fill-opacity=".62"/>
<rect x="25" y="93.7" width="3" height="1.6" fill="#b5cea8" fill-opacity=".62"/>
<rect x="28" y="93.7" width="1" height="1.6" fill="#d4d4d4" fill-opacity=".62"/>
<rect x="29" y="93.7" width="3" height="1.6" fill="#b5cea8" fill-opacity=".62"/>
<rect x="32" y="93.7" width="1" height="1.6" fill="#ffd700" fill-opacity=".3"/>
<rect x="8" y="97.7" width="1" height="1.6" fill="#6a9955" fill-opacity=".62"/>
<rect x="10" y="97.7" width="5" height="1.6" fill="#6a9955" fill-opacity=".62"/>
<rect x="16" y="97.7" width="10" height="1.6" fill="#6a9955" fill-opacity=".62"/>
<rect x="27" y="97.7" width="4" height="1.6" fill="#6a9955" fill-opacity=".62"/>
<rect x="32" y="97.7" width="7" height="1.6" fill="#6a9955" fill-opacity=".62"/>
<rect x="40" y="97.7" width="9" height="1.6" fill="#6a9955" fill-opacity=".62"/>
<rect x="8" y="99.5" width="112" height="2" fill="#ff1212" fill-opacity=".42"/>
<rect x="8" y="99.7" width="6" height="1.6" fill="#d4d4d4" fill-opacity=".62"/>
<rect x="15" y="99.7" width="1" height="1.6" fill="#d4d4d4" fill-opacity=".62"/>
<rect x="17" y="99.5" width="3" height="2" fill="#ff1e1e"/>
<rect x="20" y="99.7" width="13" height="1.6" fill="#d4d4d4" fill-opacity=".62"/>
<rect x="33" y="99.7" width="1" height="1.6" fill="#ffd700" fill-opacity=".3"/>
<rect x="34" y="99.7" width="1" height="1.6" fill="#b5cea8" fill-opacity=".62"/>
<rect x="35" y="99.7" width="1" height="1.6" fill="#ffd700" fill-opacity=".3"/>
<rect x="8" y="101.7" width="9" height="1.6" fill="#d4d4d4" fill-opacity=".62"/>
<rect x="18" y="101.7" width="1" height="1.6" fill="#d4d4d4" fill-opacity=".62"/>
<rect x="20" y="101.7" width="11" height="1.6" fill="#d4d4d4" fill-opacity=".62"/>
<rect x="31" y="101.7" width="2" height="1.6" fill="#ffd700" fill-opacity=".3"/>
<rect x="8" y="103.7" width="3" height="1.6" fill="#d4d4d4" fill-opacity=".62"/>
<rect x="12" y="103.7" width="1" height="1.6" fill="#d4d4d4" fill-opacity=".62"/>
<rect x="14" y="103.7" width="11" height="1.6" fill="#d4d4d4" fill-opacity=".62"/>
<rect x="25" y="103.7" width="1" height="1.6" fill="#ffd700" fill-opacity=".3"/>
<rect x="26" y="103.7" width="1" height="1.6" fill="#d4d4d4" fill-opacity=".62"/>
<rect x="27" y="103.7" width="1" height="1.6" fill="#b5cea8" fill-opacity=".62"/>
<rect x="28" y="103.7" width="1" height="1.6" fill="#ffd700" fill-opacity=".3"/>
<rect x="8" y="107.7" width="6" height="1.6" fill="#d4d4d4" fill-opacity=".62"/>
<rect x="15" y="107.7" width="1" height="1.6" fill="#d4d4d4" fill-opacity=".62"/>
<rect x="17" y="107.7" width="7" height="1.6" fill="#d4d4d4" fill-opacity=".62"/>
<rect x="24" y="107.7" width="1" height="1.6" fill="#ffd700" fill-opacity=".3"/>
<rect x="25" y="107.7" width="1" height="1.6" fill="#da70d6" fill-opacity=".3"/>
<rect x="26" y="107.7" width="1" height="1.6" fill="#b5cea8" fill-opacity=".62"/>
<rect x="27" y="107.7" width="1" height="1.6" fill="#d4d4d4" fill-opacity=".62"/>
<rect x="28" y="107.7" width="1" height="1.6" fill="#b5cea8" fill-opacity=".62"/>
<rect x="29" y="107.7" width="1" height="1.6" fill="#da70d6" fill-opacity=".3"/>
<rect x="30" y="107.7" width="9" height="1.6" fill="#d4d4d4" fill-opacity=".62"/>
<rect x="39" y="107.7" width="1" height="1.6" fill="#ffd700" fill-opacity=".3"/>
<rect x="8" y="111.7" width="1" height="1.6" fill="#6a9955" fill-opacity=".62"/>
<rect x="10" y="111.7" width="7" height="1.6" fill="#6a9955" fill-opacity=".62"/>
<rect x="18" y="111.7" width="3" height="1.6" fill="#6a9955" fill-opacity=".62"/>
<rect x="22" y="111.7" width="5" height="1.6" fill="#6a9955" fill-opacity=".62"/>
<rect x="28" y="111.7" width="2" height="1.6" fill="#6a9955" fill-opacity=".62"/>
<rect x="31" y="111.7" width="4" height="1.6" fill="#6a9955" fill-opacity=".62"/>
<rect x="36" y="111.7" width="3" height="1.6" fill="#6a9955" fill-opacity=".62"/>
<rect x="40" y="111.7" width="5" height="1.6" fill="#6a9955" fill-opacity=".62"/>
<rect x="46" y="111.7" width="3" height="1.6" fill="#6a9955" fill-opacity=".62"/>
<rect x="50" y="111.7" width="13" height="1.6" fill="#6a9955" fill-opacity=".62"/>
<rect x="8" y="113.5" width="112" height="2" fill="#ff1212" fill-opacity=".42"/>
<rect x="8" y="113.7" width="4" height="1.6" fill="#d4d4d4" fill-opacity=".62"/>
<rect x="13" y="113.7" width="1" height="1.6" fill="#d4d4d4" fill-opacity=".62"/>
<rect x="15" y="113.5" width="3" height="2" fill="#ff1e1e"/>
<rect x="18" y="113.7" width="7" height="1.6" fill="#d4d4d4" fill-opacity=".62"/>
<rect x="25" y="113.7" width="1" height="1.6" fill="#ffd700" fill-opacity=".3"/>
<rect x="26" y="113.5" width="3" height="2" fill="#ff1e1e"/>
<rect x="29" y="113.7" width="7" height="1.6" fill="#d4d4d4" fill-opacity=".62"/>
<rect x="36" y="113.7" width="1" height="1.6" fill="#da70d6" fill-opacity=".3"/>
<rect x="37" y="113.7" width="1" height="1.6" fill="#569cd6" fill-opacity=".62"/>
<rect x="38" y="113.7" width="18" height="1.6" fill="#d16969" fill-opacity=".62"/>
<rect x="56" y="113.7" width="1" height="1.6" fill="#da70d6" fill-opacity=".3"/>
<rect x="57" y="113.7" width="1" height="1.6" fill="#d4d4d4" fill-opacity=".62"/>
<rect x="58" y="113.7" width="1" height="1.6" fill="#da70d6" fill-opacity=".3"/>
<rect x="59" y="113.7" width="3" height="1.6" fill="#b5cea8" fill-opacity=".62"/>
<rect x="62" y="113.7" width="1" height="1.6" fill="#d4d4d4" fill-opacity=".62"/>
<rect x="63" y="113.7" width="3" height="1.6" fill="#b5cea8" fill-opacity=".62"/>
<rect x="66" y="113.7" width="1" height="1.6" fill="#da70d6" fill-opacity=".3"/>
<rect x="67" y="113.7" width="1" height="1.6" fill="#d4d4d4" fill-opacity=".62"/>
<rect x="68" y="113.7" width="13" height="1.6" fill="#9cdcfe" fill-opacity=".62"/>
<rect x="81" y="113.7" width="1" height="1.6" fill="#d4d4d4" fill-opacity=".62"/>
<rect x="82" y="113.5" width="3" height="2" fill="#ff1e1e"/>
<rect x="85" y="113.7" width="12" height="1.6" fill="#d4d4d4" fill-opacity=".62"/>
<rect x="97" y="113.7" width="1" height="1.6" fill="#ffd700" fill-opacity=".3"/>
<rect x="8" y="115.5" width="112" height="2" fill="#ff1212" fill-opacity=".42"/>
<rect x="8" y="115.7" width="5" height="1.6" fill="#d4d4d4" fill-opacity=".62"/>
<rect x="14" y="115.7" width="1" height="1.6" fill="#d4d4d4" fill-opacity=".62"/>
<rect x="16" y="115.5" width="3" height="2" fill="#ff1e1e"/>
<rect x="19" y="115.7" width="7" height="1.6" fill="#d4d4d4" fill-opacity=".62"/>
<rect x="26" y="115.7" width="1" height="1.6" fill="#ffd700" fill-opacity=".3"/>
<rect x="27" y="115.5" width="3" height="2" fill="#ff1e1e"/>
<rect x="30" y="115.7" width="7" height="1.6" fill="#d4d4d4" fill-opacity=".62"/>
<rect x="37" y="115.7" width="1" height="1.6" fill="#da70d6" fill-opacity=".3"/>
<rect x="38" y="115.7" width="1" height="1.6" fill="#569cd6" fill-opacity=".62"/>
<rect x="39" y="115.7" width="20" height="1.6" fill="#d16969" fill-opacity=".62"/>
<rect x="59" y="115.7" width="1" height="1.6" fill="#da70d6" fill-opacity=".3"/>
<rect x="60" y="115.7" width="1" height="1.6" fill="#d4d4d4" fill-opacity=".62"/>
<rect x="61" y="115.7" width="1" height="1.6" fill="#da70d6" fill-opacity=".3"/>
<rect x="62" y="115.7" width="3" height="1.6" fill="#b5cea8" fill-opacity=".62"/>
<rect x="65" y="115.7" width="1" height="1.6" fill="#d4d4d4" fill-opacity=".62"/>
<rect x="66" y="115.7" width="3" height="1.6" fill="#b5cea8" fill-opacity=".62"/>
<rect x="69" y="115.7" width="1" height="1.6" fill="#da70d6" fill-opacity=".3"/>
<rect x="70" y="115.7" width="1" height="1.6" fill="#d4d4d4" fill-opacity=".62"/>
<rect x="71" y="115.7" width="13" height="1.6" fill="#9cdcfe" fill-opacity=".62"/>
<rect x="84" y="115.7" width="1" height="1.6" fill="#d4d4d4" fill-opacity=".62"/>
<rect x="85" y="115.5" width="3" height="2" fill="#ff1e1e"/>
<rect x="88" y="115.7" width="12" height="1.6" fill="#d4d4d4" fill-opacity=".62"/>
<rect x="100" y="115.7" width="1" height="1.6" fill="#ffd700" fill-opacity=".3"/>
<rect x="8" y="121.7" width="1" height="1.6" fill="#6a9955" fill-opacity=".62"/>
<rect x="10" y="121.7" width="7" height="1.6" fill="#6a9955" fill-opacity=".62"/>
<rect x="18" y="121.7" width="3" height="1.6" fill="#6a9955" fill-opacity=".62"/>
<rect x="22" y="121.7" width="3" height="1.6" fill="#6a9955" fill-opacity=".62"/>
<rect x="26" y="121.7" width="4" height="1.6" fill="#6a9955" fill-opacity=".62"/>
<rect x="31" y="121.7" width="3" height="1.6" fill="#6a9955" fill-opacity=".62"/>
<rect x="35" y="121.7" width="4" height="1.6" fill="#6a9955" fill-opacity=".62"/>
<rect x="40" y="121.7" width="5" height="1.6" fill="#6a9955" fill-opacity=".62"/>
<rect x="46" y="121.7" width="9" height="1.6" fill="#6a9955" fill-opacity=".62"/>
<rect x="8" y="123.7" width="11" height="1.6" fill="#d4d4d4" fill-opacity=".62"/>
<rect x="20" y="123.7" width="1" height="1.6" fill="#d4d4d4" fill-opacity=".62"/>
<rect x="22" y="123.7" width="1" height="1.6" fill="#ffd700" fill-opacity=".3"/>
<rect x="23" y="123.7" width="8" height="1.6" fill="#d4d4d4" fill-opacity=".62"/>
<rect x="31" y="123.7" width="1" height="1.6" fill="#da70d6" fill-opacity=".3"/>
<rect x="32" y="123.7" width="5" height="1.6" fill="#d4d4d4" fill-opacity=".62"/>
<rect x="37" y="123.7" width="2" height="1.6" fill="#da70d6" fill-opacity=".3"/>
<rect x="39" y="123.7" width="1" height="1.6" fill="#b5cea8" fill-opacity=".62"/>
<rect x="40" y="123.7" width="1" height="1.6" fill="#da70d6" fill-opacity=".3"/>
<rect x="41" y="123.7" width="1" height="1.6" fill="#d4d4d4" fill-opacity=".62"/>
<rect x="42" y="123.7" width="1" height="1.6" fill="#b5cea8" fill-opacity=".62"/>
<rect x="43" y="123.7" width="2" height="1.6" fill="#d4d4d4" fill-opacity=".62"/>
<rect x="45" y="123.7" width="1" height="1.6" fill="#b5cea8" fill-opacity=".62"/>
<rect x="46" y="123.7" width="9" height="1.6" fill="#d4d4d4" fill-opacity=".62"/>
<rect x="55" y="123.7" width="1" height="1.6" fill="#da70d6" fill-opacity=".3"/>
<rect x="56" y="123.7" width="5" height="1.6" fill="#d4d4d4" fill-opacity=".62"/>
<rect x="61" y="123.7" width="2" height="1.6" fill="#da70d6" fill-opacity=".3"/>
<rect x="63" y="123.7" width="1" height="1.6" fill="#b5cea8" fill-opacity=".62"/>
<rect x="64" y="123.7" width="1" height="1.6" fill="#da70d6" fill-opacity=".3"/>
<rect x="65" y="123.7" width="1" height="1.6" fill="#d4d4d4" fill-opacity=".62"/>
<rect x="66" y="123.7" width="1" height="1.6" fill="#b5cea8" fill-opacity=".62"/>
<rect x="67" y="123.7" width="2" height="1.6" fill="#d4d4d4" fill-opacity=".62"/>
<rect x="69" y="123.7" width="1" height="1.6" fill="#b5cea8" fill-opacity=".62"/>
<rect x="70" y="123.7" width="1" height="1.6" fill="#ffd700" fill-opacity=".3"/>
<rect x="8" y="125.7" width="12" height="1.6" fill="#d4d4d4" fill-opacity=".62"/>
<rect x="21" y="125.7" width="1" height="1.6" fill="#d4d4d4" fill-opacity=".62"/>
<rect x="23" y="125.7" width="1" height="1.6" fill="#ffd700" fill-opacity=".3"/>
<rect x="24" y="125.7" width="8" height="1.6" fill="#d4d4d4" fill-opacity=".62"/>
<rect x="32" y="125.7" width="1" height="1.6" fill="#da70d6" fill-opacity=".3"/>
<rect x="33" y="125.7" width="5" height="1.6" fill="#d4d4d4" fill-opacity=".62"/>
<rect x="38" y="125.7" width="2" height="1.6" fill="#da70d6" fill-opacity=".3"/>
<rect x="40" y="125.7" width="1" height="1.6" fill="#b5cea8" fill-opacity=".62"/>
<rect x="41" y="125.7" width="1" height="1.6" fill="#da70d6" fill-opacity=".3"/>
<rect x="42" y="125.7" width="1" height="1.6" fill="#d4d4d4" fill-opacity=".62"/>
<rect x="43" y="125.7" width="1" height="1.6" fill="#b5cea8" fill-opacity=".62"/>
<rect x="44" y="125.7" width="2" height="1.6" fill="#d4d4d4" fill-opacity=".62"/>
<rect x="46" y="125.7" width="1" height="1.6" fill="#b5cea8" fill-opacity=".62"/>
<rect x="47" y="125.7" width="9" height="1.6" fill="#d4d4d4" fill-opacity=".62"/>
<rect x="56" y="125.7" width="1" height="1.6" fill="#da70d6" fill-opacity=".3"/>
<rect x="57" y="125.7" width="5" height="1.6" fill="#d4d4d4" fill-opacity=".62"/>
<rect x="62" y="125.7" width="2" height="1.6" fill="#da70d6" fill-opacity=".3"/>
<rect x="64" y="125.7" width="1" height="1.6" fill="#b5cea8" fill-opacity=".62"/>
<rect x="65" y="125.7" width="1" height="1.6" fill="#da70d6" fill-opacity=".3"/>
<rect x="66" y="125.7" width="1" height="1.6" fill="#d4d4d4" fill-opacity=".62"/>
<rect x="67" y="125.7" width="1" height="1.6" fill="#b5cea8" fill-opacity=".62"/>
<rect x="68" y="125.7" width="2" height="1.6" fill="#d4d4d4" fill-opacity=".62"/>
<rect x="70" y="125.7" width="1" height="1.6" fill="#b5cea8" fill-opacity=".62"/>
<rect x="71" y="125.7" width="1" height="1.6" fill="#ffd700" fill-opacity=".3"/>
<rect x="8" y="127.7" width="14" height="1.6" fill="#d4d4d4" fill-opacity=".62"/>
<rect x="23" y="127.7" width="1" height="1.6" fill="#d4d4d4" fill-opacity=".62"/>
<rect x="25" y="127.7" width="1" height="1.6" fill="#ffd700" fill-opacity=".3"/>
<rect x="26" y="127.7" width="3" height="1.6" fill="#b5cea8" fill-opacity=".62"/>
<rect x="29" y="127.7" width="1" height="1.6" fill="#d4d4d4" fill-opacity=".62"/>
<rect x="30" y="127.7" width="3" height="1.6" fill="#b5cea8" fill-opacity=".62"/>
<rect x="33" y="127.7" width="1" height="1.6" fill="#ffd700" fill-opacity=".3"/>
<rect x="8" y="129.7" width="8" height="1.6" fill="#d4d4d4" fill-opacity=".62"/>
<rect x="17" y="129.7" width="1" height="1.6" fill="#d4d4d4" fill-opacity=".62"/>
<rect x="19" y="129.7" width="1" height="1.6" fill="#ffd700" fill-opacity=".3"/>
<rect x="20" y="129.7" width="11" height="1.6" fill="#d4d4d4" fill-opacity=".62"/>
<rect x="31" y="129.7" width="1" height="1.6" fill="#da70d6" fill-opacity=".3"/>
<rect x="32" y="129.7" width="1" height="1.6" fill="#b5cea8" fill-opacity=".62"/>
<rect x="33" y="129.7" width="1" height="1.6" fill="#da70d6" fill-opacity=".3"/>
<rect x="34" y="129.7" width="15" height="1.6" fill="#d4d4d4" fill-opacity=".62"/>
<rect x="49" y="129.7" width="1" height="1.6" fill="#da70d6" fill-opacity=".3"/>
<rect x="50" y="129.7" width="1" height="1.6" fill="#b5cea8" fill-opacity=".62"/>
<rect x="51" y="129.7" width="1" height="1.6" fill="#da70d6" fill-opacity=".3"/>
<rect x="52" y="129.7" width="2" height="1.6" fill="#d4d4d4" fill-opacity=".62"/>
<rect x="54" y="129.7" width="1" height="1.6" fill="#b5cea8" fill-opacity=".62"/>
<rect x="55" y="129.7" width="12" height="1.6" fill="#d4d4d4" fill-opacity=".62"/>
<rect x="67" y="129.7" width="1" height="1.6" fill="#da70d6" fill-opacity=".3"/>
<rect x="68" y="129.7" width="1" height="1.6" fill="#b5cea8" fill-opacity=".62"/>
<rect x="69" y="129.7" width="1" height="1.6" fill="#da70d6" fill-opacity=".3"/>
<rect x="70" y="129.7" width="15" height="1.6" fill="#d4d4d4" fill-opacity=".62"/>
<rect x="85" y="129.7" width="1" height="1.6" fill="#da70d6" fill-opacity=".3"/>
<rect x="86" y="129.7" width="1" height="1.6" fill="#b5cea8" fill-opacity=".62"/>
<rect x="87" y="129.7" width="1" height="1.6" fill="#da70d6" fill-opacity=".3"/>
<rect x="88" y="129.7" width="2" height="1.6" fill="#d4d4d4" fill-opacity=".62"/>
<rect x="90" y="129.7" width="1" height="1.6" fill="#b5cea8" fill-opacity=".62"/>
<rect x="91" y="129.7" width="1" height="1.6" fill="#ffd700" fill-opacity=".3"/>
<rect x="8" y="131.7" width="8" height="1.6" fill="#d4d4d4" fill-opacity=".62"/>
<rect x="17" y="131.7" width="1" height="1.6" fill="#d4d4d4" fill-opacity=".62"/>
<rect x="19" y="131.7" width="1" height="1.6" fill="#ffd700" fill-opacity=".3"/>
<rect x="20" y="131.7" width="11" height="1.6" fill="#d4d4d4" fill-opacity=".62"/>
<rect x="31" y="131.7" width="1" height="1.6" fill="#da70d6" fill-opacity=".3"/>
<rect x="32" y="131.7" width="1" height="1.6" fill="#b5cea8" fill-opacity=".62"/>
<rect x="33" y="131.7" width="1" height="1.6" fill="#da70d6" fill-opacity=".3"/>
<rect x="34" y="131.7" width="15" height="1.6" fill="#d4d4d4" fill-opacity=".62"/>
<rect x="49" y="131.7" width="1" height="1.6" fill="#da70d6" fill-opacity=".3"/>
<rect x="50" y="131.7" width="1" height="1.6" fill="#b5cea8" fill-opacity=".62"/>
<rect x="51" y="131.7" width="1" height="1.6" fill="#da70d6" fill-opacity=".3"/>
<rect x="52" y="131.7" width="2" height="1.6" fill="#d4d4d4" fill-opacity=".62"/>
<rect x="54" y="131.7" width="1" height="1.6" fill="#b5cea8" fill-opacity=".62"/>
<rect x="55" y="131.7" width="12" height="1.6" fill="#d4d4d4" fill-opacity=".62"/>
<rect x="67" y="131.7" width="1" height="1.6" fill="#da70d6" fill-opacity=".3"/>
<rect x="68" y="131.7" width="1" height="1.6" fill="#b5cea8" fill-opacity=".62"/>
<rect x="69" y="131.7" width="1" height="1.6" fill="#da70d6" fill-opacity=".3"/>
<rect x="70" y="131.7" width="15" height="1.6" fill="#d4d4d4" fill-opacity=".62"/>
<rect x="85" y="131.7" width="1" height="1.6" fill="#da70d6" fill-opacity=".3"/>
<rect x="86" y="131.7" width="1" height="1.6" fill="#b5cea8" fill-opacity=".62"/>
<rect x="87" y="131.7" width="1" height="1.6" fill="#da70d6" fill-opacity=".3"/>
<rect x="88" y="131.7" width="2" height="1.6" fill="#d4d4d4" fill-opacity=".62"/>
<rect x="90" y="131.7" width="1" height="1.6" fill="#b5cea8" fill-opacity=".62"/>
<rect x="91" y="131.7" width="1" height="1.6" fill="#ffd700" fill-opacity=".3"/>
<rect x="8" y="135.7" width="15" height="1.6" fill="#d4d4d4" fill-opacity=".62"/>
<rect x="24" y="135.7" width="1" height="1.6" fill="#d4d4d4" fill-opacity=".62"/>
<rect x="26" y="135.7" width="1" height="1.6" fill="#ffd700" fill-opacity=".3"/>
<rect x="27" y="135.7" width="3" height="1.6" fill="#b5cea8" fill-opacity=".62"/>
<rect x="30" y="135.7" width="1" height="1.6" fill="#d4d4d4" fill-opacity=".62"/>
<rect x="31" y="135.7" width="3" height="1.6" fill="#b5cea8" fill-opacity=".62"/>
<rect x="34" y="135.7" width="1" height="1.6" fill="#ffd700" fill-opacity=".3"/>
<rect x="8" y="137.7" width="9" height="1.6" fill="#d4d4d4" fill-opacity=".62"/>
<rect x="18" y="137.7" width="1" height="1.6" fill="#d4d4d4" fill-opacity=".62"/>
<rect x="20" y="137.7" width="1" height="1.6" fill="#ffd700" fill-opacity=".3"/>
<rect x="21" y="137.7" width="12" height="1.6" fill="#d4d4d4" fill-opacity=".62"/>
<rect x="33" y="137.7" width="1" height="1.6" fill="#da70d6" fill-opacity=".3"/>
<rect x="34" y="137.7" width="1" height="1.6" fill="#b5cea8" fill-opacity=".62"/>
<rect x="35" y="137.7" width="1" height="1.6" fill="#da70d6" fill-opacity=".3"/>
<rect x="36" y="137.7" width="16" height="1.6" fill="#d4d4d4" fill-opacity=".62"/>
<rect x="52" y="137.7" width="1" height="1.6" fill="#da70d6" fill-opacity=".3"/>
<rect x="53" y="137.7" width="1" height="1.6" fill="#b5cea8" fill-opacity=".62"/>
<rect x="54" y="137.7" width="1" height="1.6" fill="#da70d6" fill-opacity=".3"/>
<rect x="55" y="137.7" width="2" height="1.6" fill="#d4d4d4" fill-opacity=".62"/>
<rect x="57" y="137.7" width="1" height="1.6" fill="#b5cea8" fill-opacity=".62"/>
<rect x="58" y="137.7" width="13" height="1.6" fill="#d4d4d4" fill-opacity=".62"/>
<rect x="71" y="137.7" width="1" height="1.6" fill="#da70d6" fill-opacity=".3"/>
<rect x="72" y="137.7" width="1" height="1.6" fill="#b5cea8" fill-opacity=".62"/>
<rect x="73" y="137.7" width="1" height="1.6" fill="#da70d6" fill-opacity=".3"/>
<rect x="74" y="137.7" width="16" height="1.6" fill="#d4d4d4" fill-opacity=".62"/>
<rect x="90" y="137.7" width="1" height="1.6" fill="#da70d6" fill-opacity=".3"/>
<rect x="91" y="137.7" width="1" height="1.6" fill="#b5cea8" fill-opacity=".62"/>
<rect x="92" y="137.7" width="1" height="1.6" fill="#da70d6" fill-opacity=".3"/>
<rect x="93" y="137.7" width="2" height="1.6" fill="#d4d4d4" fill-opacity=".62"/>
<rect x="95" y="137.7" width="1" height="1.6" fill="#b5cea8" fill-opacity=".62"/>
<rect x="96" y="137.7" width="1" height="1.6" fill="#ffd700" fill-opacity=".3"/>
<rect x="8" y="139.7" width="9" height="1.6" fill="#d4d4d4" fill-opacity=".62"/>
<rect x="18" y="139.7" width="1" height="1.6" fill="#d4d4d4" fill-opacity=".62"/>
<rect x="20" y="139.7" width="1" height="1.6" fill="#ffd700" fill-opacity=".3"/>
<rect x="21" y="139.7" width="12" height="1.6" fill="#d4d4d4" fill-opacity=".62"/>
<rect x="33" y="139.7" width="1" height="1.6" fill="#da70d6" fill-opacity=".3"/>
<rect x="34" y="139.7" width="1" height="1.6" fill="#b5cea8" fill-opacity=".62"/>
<rect x="35" y="139.7" width="1" height="1.6" fill="#da70d6" fill-opacity=".3"/>
<rect x="36" y="139.7" width="16" height="1.6" fill="#d4d4d4" fill-opacity=".62"/>
<rect x="52" y="139.7" width="1" height="1.6" fill="#da70d6" fill-opacity=".3"/>
<rect x="53" y="139.7" width="1" height="1.6" fill="#b5cea8" fill-opacity=".62"/>
<rect x="54" y="139.7" width="1" height="1.6" fill="#da70d6" fill-opacity=".3"/>
<rect x="55" y="139.7" width="2" height="1.6" fill="#d4d4d4" fill-opacity=".62"/>
<rect x="57" y="139.7" width="1" height="1.6" fill="#b5cea8" fill-opacity=".62"/>
<rect x="58" y="139.7" width="13" height="1.6" fill="#d4d4d4" fill-opacity=".62"/>
<rect x="71" y="139.7" width="1" height="1.6" fill="#da70d6" fill-opacity=".3"/>
<rect x="72" y="139.7" width="1" height="1.6" fill="#b5cea8" fill-opacity=".62"/>
<rect x="73" y="139.7" width="1" height="1.6" fill="#da70d6" fill-opacity=".3"/>
<rect x="74" y="139.7" width="16" height="1.6" fill="#d4d4d4" fill-opacity=".62"/>
<rect x="90" y="139.7" width="1" height="1.6" fill="#da70d6" fill-opacity=".3"/>
<rect x="91" y="139.7" width="1" height="1.6" fill="#b5cea8" fill-opacity=".62"/>
<rect x="92" y="139.7" width="1" height="1.6" fill="#da70d6" fill-opacity=".3"/>
<rect x="93" y="139.7" width="2" height="1.6" fill="#d4d4d4" fill-opacity=".62"/>
<rect x="95" y="139.7" width="1" height="1.6" fill="#b5cea8" fill-opacity=".62"/>
<rect x="96" y="139.7" width="1" height="1.6" fill="#ffd700" fill-opacity=".3"/>
<rect x="8" y="145.7" width="10" height="1.6" fill="#d4d4d4" fill-opacity=".62"/>
<rect x="18" y="145.7" width="1" height="1.6" fill="#ffd700" fill-opacity=".3"/>
<rect x="19" y="145.7" width="1" height="1.6" fill="#b5cea8" fill-opacity=".62"/>
<rect x="20" y="145.7" width="1" height="1.6" fill="#ffd700" fill-opacity=".3"/>
<rect x="8" y="149.7" width="5" height="1.6" fill="#c586c0" fill-opacity=".62"/>
<rect x="14" y="149.7" width="4" height="1.6" fill="#569cd6" fill-opacity=".62"/>
<rect x="18" y="149.7" width="1" height="1.6" fill="#d4d4d4" fill-opacity=".62"/>
<rect x="12" y="153.7" width="1" height="1.6" fill="#6a9955" fill-opacity=".62"/>
<rect x="14" y="153.7" width="4" height="1.6" fill="#6a9955" fill-opacity=".62"/>
<rect x="19" y="153.7" width="3" height="1.6" fill="#6a9955" fill-opacity=".62"/>
<rect x="23" y="153.7" width="7" height="1.6" fill="#6a9955" fill-opacity=".62"/>
<rect x="31" y="153.7" width="5" height="1.6" fill="#6a9955" fill-opacity=".62"/>
<rect x="12" y="155.7" width="4" height="1.6" fill="#d4d4d4" fill-opacity=".62"/>
<rect x="17" y="155.7" width="5" height="1.6" fill="#d4d4d4" fill-opacity=".62"/>
<rect x="23" y="155.7" width="1" height="1.6" fill="#d4d4d4" fill-opacity=".62"/>
<rect x="25" y="155.7" width="11" height="1.6" fill="#d4d4d4" fill-opacity=".62"/>
<rect x="36" y="155.7" width="2" height="1.6" fill="#ffd700" fill-opacity=".3"/>
<rect x="8" y="157.5" width="112" height="2" fill="#ff1212" fill-opacity=".42"/>
<rect x="12" y="157.7" width="5" height="1.6" fill="#d4d4d4" fill-opacity=".62"/>
<rect x="18" y="157.7" width="1" height="1.6" fill="#d4d4d4" fill-opacity=".62"/>
<rect x="20" y="157.5" width="3" height="2" fill="#ff1e1e"/>
<rect x="23" y="157.7" width="5" height="1.6" fill="#d4d4d4" fill-opacity=".62"/>
<rect x="28" y="157.7" width="1" height="1.6" fill="#ffd700" fill-opacity=".3"/>
<rect x="29" y="157.7" width="6" height="1.6" fill="#d4d4d4" fill-opacity=".62"/>
<rect x="35" y="157.7" width="1" height="1.6" fill="#b5cea8" fill-opacity=".62"/>
<rect x="36" y="157.7" width="1" height="1.6" fill="#ffd700" fill-opacity=".3"/>
<rect x="12" y="161.7" width="2" height="1.6" fill="#c586c0" fill-opacity=".62"/>
<rect x="15" y="161.7" width="3" height="1.6" fill="#569cd6" fill-opacity=".62"/>
<rect x="18" y="161.7" width="1" height="1.6" fill="#ffd700" fill-opacity=".3"/>
<rect x="19" y="161.7" width="3" height="1.6" fill="#d4d4d4" fill-opacity=".62"/>
<rect x="22" y="161.7" width="1" height="1.6" fill="#ffd700" fill-opacity=".3"/>
<rect x="23" y="161.7" width="1" height="1.6" fill="#d4d4d4" fill-opacity=".62"/>
<rect x="16" y="163.7" width="5" height="1.6" fill="#c586c0" fill-opacity=".62"/>
<rect x="12" y="167.7" width="1" height="1.6" fill="#6a9955" fill-opacity=".62"/>
<rect x="14" y="167.7" width="9" height="1.6" fill="#6a9955" fill-opacity=".62"/>
<rect x="24" y="167.7" width="3" height="1.6" fill="#6a9955" fill-opacity=".62"/>
<rect x="28" y="167.7" width="13" height="1.6" fill="#6a9955" fill-opacity=".62"/>
<rect x="42" y="167.7" width="2" height="1.6" fill="#6a9955" fill-opacity=".62"/>
<rect x="45" y="167.7" width="5" height="1.6" fill="#6a9955" fill-opacity=".62"/>
<rect x="12" y="169.7" width="9" height="1.6" fill="#d4d4d4" fill-opacity=".62"/>
<rect x="22" y="169.7" width="1" height="1.6" fill="#d4d4d4" fill-opacity=".62"/>
<rect x="24" y="169.7" width="7" height="1.6" fill="#d4d4d4" fill-opacity=".62"/>
<rect x="31" y="169.7" width="1" height="1.6" fill="#ffd700" fill-opacity=".3"/>
<rect x="32" y="169.7" width="5" height="1.6" fill="#d4d4d4" fill-opacity=".62"/>
<rect x="37" y="169.7" width="1" height="1.6" fill="#da70d6" fill-opacity=".3"/>
<rect x="38" y="169.7" width="9" height="1.6" fill="#d4d4d4" fill-opacity=".62"/>
<rect x="47" y="169.7" width="1" height="1.6" fill="#87cefa" fill-opacity=".3"/>
<rect x="48" y="169.7" width="1" height="1.6" fill="#b5cea8" fill-opacity=".62"/>
<rect x="49" y="169.7" width="1" height="1.6" fill="#87cefa" fill-opacity=".3"/>
<rect x="50" y="169.7" width="10" height="1.6" fill="#d4d4d4" fill-opacity=".62"/>
<rect x="60" y="169.7" width="1" height="1.6" fill="#87cefa" fill-opacity=".3"/>
<rect x="61" y="169.7" width="1" height="1.6" fill="#b5cea8" fill-opacity=".62"/>
<rect x="62" y="169.7" width="1" height="1.6" fill="#87cefa" fill-opacity=".3"/>
<rect x="63" y="169.7" width="10" height="1.6" fill="#d4d4d4" fill-opacity=".62"/>
<rect x="73" y="169.7" width="1" height="1.6" fill="#87cefa" fill-opacity=".3"/>
<rect x="74" y="169.7" width="1" height="1.6" fill="#b5cea8" fill-opacity=".62"/>
<rect x="75" y="169.7" width="1" height="1.6" fill="#87cefa" fill-opacity=".3"/>
<rect x="76" y="169.7" width="10" height="1.6" fill="#d4d4d4" fill-opacity=".62"/>
<rect x="86" y="169.7" width="1" height="1.6" fill="#87cefa" fill-opacity=".3"/>
<rect x="87" y="169.7" width="1" height="1.6" fill="#b5cea8" fill-opacity=".62"/>
<rect x="88" y="169.7" width="1" height="1.6" fill="#87cefa" fill-opacity=".3"/>
<rect x="89" y="169.7" width="1" height="1.6" fill="#da70d6" fill-opacity=".3"/>
<rect x="90" y="169.7" width="1" height="1.6" fill="#ffd700" fill-opacity=".3"/>
<rect x="12" y="171.7" width="4" height="1.6" fill="#d4d4d4" fill-opacity=".62"/>
<rect x="17" y="171.7" width="1" height="1.6" fill="#d4d4d4" fill-opacity=".62"/>
<rect x="19" y="171.7" width="12" height="1.6" fill="#d4d4d4" fill-opacity=".62"/>
<rect x="31" y="171.7" width="1" height="1.6" fill="#ffd700" fill-opacity=".3"/>
<rect x="32" y="171.7" width="10" height="1.6" fill="#d4d4d4" fill-opacity=".62"/>
<rect x="42" y="171.7" width="1" height="1.6" fill="#b5cea8" fill-opacity=".62"/>
<rect x="43" y="171.7" width="1" height="1.6" fill="#ffd700" fill-opacity=".3"/>
<rect x="12" y="175.7" width="1" height="1.6" fill="#6a9955" fill-opacity=".62"/>
<rect x="14" y="175.7" width="9" height="1.6" fill="#6a9955" fill-opacity=".62"/>
<rect x="24" y="175.7" width="3" height="1.6" fill="#6a9955" fill-opacity=".62"/>
<rect x="28" y="175.7" width="13" height="1.6" fill="#6a9955" fill-opacity=".62"/>
<rect x="42" y="175.7" width="2" height="1.6" fill="#6a9955" fill-opacity=".62"/>
<rect x="45" y="175.7" width="4" height="1.6" fill="#6a9955" fill-opacity=".62"/>
<rect x="12" y="177.7" width="8" height="1.6" fill="#d4d4d4" fill-opacity=".62"/>
<rect x="21" y="177.7" width="1" height="1.6" fill="#d4d4d4" fill-opacity=".62"/>
<rect x="23" y="177.7" width="7" height="1.6" fill="#d4d4d4" fill-opacity=".62"/>
<rect x="30" y="177.7" width="1" height="1.6" fill="#ffd700" fill-opacity=".3"/>
<rect x="31" y="177.7" width="5" height="1.6" fill="#d4d4d4" fill-opacity=".62"/>
<rect x="36" y="177.7" width="1" height="1.6" fill="#da70d6" fill-opacity=".3"/>
<rect x="37" y="177.7" width="8" height="1.6" fill="#d4d4d4" fill-opacity=".62"/>
<rect x="45" y="177.7" width="1" height="1.6" fill="#87cefa" fill-opacity=".3"/>
<rect x="46" y="177.7" width="1" height="1.6" fill="#b5cea8" fill-opacity=".62"/>
<rect x="47" y="177.7" width="1" height="1.6" fill="#87cefa" fill-opacity=".3"/>
<rect x="48" y="177.7" width="9" height="1.6" fill="#d4d4d4" fill-opacity=".62"/>
<rect x="57" y="177.7" width="1" height="1.6" fill="#87cefa" fill-opacity=".3"/>
<rect x="58" y="177.7" width="1" height="1.6" fill="#b5cea8" fill-opacity=".62"/>
<rect x="59" y="177.7" width="1" height="1.6" fill="#87cefa" fill-opacity=".3"/>
<rect x="60" y="177.7" width="9" height="1.6" fill="#d4d4d4" fill-opacity=".62"/>
<rect x="69" y="177.7" width="1" height="1.6" fill="#87cefa" fill-opacity=".3"/>
<rect x="70" y="177.7" width="1" height="1.6" fill="#b5cea8" fill-opacity=".62"/>
<rect x="71" y="177.7" width="1" height="1.6" fill="#87cefa" fill-opacity=".3"/>
<rect x="72" y="177.7" width="9" height="1.6" fill="#d4d4d4" fill-opacity=".62"/>
<rect x="81" y="177.7" width="1" height="1.6" fill="#87cefa" fill-opacity=".3"/>
<rect x="82" y="177.7" width="1" height="1.6" fill="#b5cea8" fill-opacity=".62"/>
<rect x="83" y="177.7" width="1" height="1.6" fill="#87cefa" fill-opacity=".3"/>
<rect x="84" y="177.7" width="1" height="1.6" fill="#da70d6" fill-opacity=".3"/>
<rect x="85" y="177.7" width="1" height="1.6" fill="#ffd700" fill-opacity=".3"/>
<rect x="12" y="179.7" width="4" height="1.6" fill="#d4d4d4" fill-opacity=".62"/>
<rect x="17" y="179.7" width="1" height="1.6" fill="#d4d4d4" fill-opacity=".62"/>
<rect x="19" y="179.7" width="12" height="1.6" fill="#d4d4d4" fill-opacity=".62"/>
<rect x="31" y="179.7" width="1" height="1.6" fill="#ffd700" fill-opacity=".3"/>
<rect x="32" y="179.7" width="9" height="1.6" fill="#d4d4d4" fill-opacity=".62"/>
<rect x="41" y="179.7" width="1" height="1.6" fill="#b5cea8" fill-opacity=".62"/>
<rect x="42" y="179.7" width="1" height="1.6" fill="#ffd700" fill-opacity=".3"/>
<rect x="12" y="183.7" width="1" height="1.6" fill="#6a9955" fill-opacity=".62"/>
<rect x="14" y="183.7" width="1" height="1.6" fill="#6a9955" fill-opacity=".62"/>
<rect x="16" y="183.7" width="7" height="1.6" fill="#6a9955" fill-opacity=".62"/>
<rect x="24" y="183.7" width="4" height="1.6" fill="#6a9955" fill-opacity=".62"/>
<rect x="29" y="183.7" width="2" height="1.6" fill="#6a9955" fill-opacity=".62"/>
<rect x="32" y="183.7" width="2" height="1.6" fill="#6a9955" fill-opacity=".62"/>
<rect x="35" y="183.7" width="6" height="1.6" fill="#6a9955" fill-opacity=".62"/>
<rect x="8" y="185.5" width="112" height="2" fill="#ff1212" fill-opacity=".42"/>
<rect x="12" y="185.5" width="3" height="2" fill="#ff1e1e"/>
<rect x="15" y="185.7" width="8" height="1.6" fill="#d4d4d4" fill-opacity=".62"/>
<rect x="23" y="185.7" width="1" height="1.6" fill="#ffd700" fill-opacity=".3"/>
<rect x="24" y="185.7" width="6" height="1.6" fill="#d4d4d4" fill-opacity=".62"/>
<rect x="30" y="185.7" width="9" height="1.6" fill="#ce9178" fill-opacity=".62"/>
<rect x="40" y="185.7" width="3" height="1.6" fill="#ce9178" fill-opacity=".62"/>
<rect x="44" y="185.7" width="5" height="1.6" fill="#ce9178" fill-opacity=".62"/>
<rect x="50" y="185.7" width="2" height="1.6" fill="#ce9178" fill-opacity=".62"/>
<rect x="53" y="185.7" width="8" height="1.6" fill="#ce9178" fill-opacity=".62"/>
<rect x="61" y="185.7" width="1" height="1.6" fill="#d4d4d4" fill-opacity=".62"/>
<rect x="62" y="185.7" width="1" height="1.6" fill="#da70d6" fill-opacity=".3"/>
<rect x="63" y="185.7" width="2" height="1.6" fill="#b5cea8" fill-opacity=".62"/>
<rect x="65" y="185.7" width="1" height="1.6" fill="#d4d4d4" fill-opacity=".62"/>
<rect x="66" y="185.7" width="2" height="1.6" fill="#b5cea8" fill-opacity=".62"/>
<rect x="68" y="185.7" width="1" height="1.6" fill="#da70d6" fill-opacity=".3"/>
<rect x="69" y="185.7" width="1" height="1.6" fill="#d4d4d4" fill-opacity=".62"/>
<rect x="70" y="185.7" width="1" height="1.6" fill="#b5cea8" fill-opacity=".62"/>
<rect x="71" y="185.7" width="1" height="1.6" fill="#d4d4d4" fill-opacity=".62"/>
<rect x="72" y="185.7" width="1" height="1.6" fill="#b5cea8" fill-opacity=".62"/>
<rect x="73" y="185.7" width="1" height="1.6" fill="#d4d4d4" fill-opacity=".62"/>
<rect x="74" y="185.7" width="1" height="1.6" fill="#da70d6" fill-opacity=".3"/>
<rect x="75" y="185.7" width="2" height="1.6" fill="#b5cea8" fill-opacity=".62"/>
<rect x="77" y="185.7" width="1" height="1.6" fill="#d4d4d4" fill-opacity=".62"/>
<rect x="78" y="185.7" width="2" height="1.6" fill="#b5cea8" fill-opacity=".62"/>
<rect x="80" y="185.7" width="1" height="1.6" fill="#d4d4d4" fill-opacity=".62"/>
<rect x="81" y="185.7" width="2" height="1.6" fill="#b5cea8" fill-opacity=".62"/>
<rect x="83" y="185.7" width="1" height="1.6" fill="#da70d6" fill-opacity=".3"/>
<rect x="84" y="185.7" width="1" height="1.6" fill="#d4d4d4" fill-opacity=".62"/>
<rect x="85" y="185.7" width="1" height="1.6" fill="#b5cea8" fill-opacity=".62"/>
<rect x="86" y="185.7" width="1" height="1.6" fill="#ffd700" fill-opacity=".3"/>
<rect x="12" y="189.7" width="1" height="1.6" fill="#6a9955" fill-opacity=".62"/>
<rect x="14" y="189.7" width="7" height="1.6" fill="#6a9955" fill-opacity=".62"/>
<rect x="22" y="189.7" width="3" height="1.6" fill="#6a9955" fill-opacity=".62"/>
<rect x="26" y="189.7" width="3" height="1.6" fill="#6a9955" fill-opacity=".62"/>
<rect x="30" y="189.7" width="2" height="1.6" fill="#6a9955" fill-opacity=".62"/>
<rect x="33" y="189.7" width="4" height="1.6" fill="#6a9955" fill-opacity=".62"/>
<rect x="38" y="189.7" width="3" height="1.6" fill="#6a9955" fill-opacity=".62"/>
<rect x="42" y="189.7" width="4" height="1.6" fill="#6a9955" fill-opacity=".62"/>
<rect x="47" y="189.7" width="6" height="1.6" fill="#6a9955" fill-opacity=".62"/>
<rect x="54" y="189.7" width="5" height="1.6" fill="#6a9955" fill-opacity=".62"/>
<rect x="60" y="189.7" width="8" height="1.6" fill="#6a9955" fill-opacity=".62"/>
<rect x="12" y="191.7" width="2" height="1.6" fill="#c586c0" fill-opacity=".62"/>
<rect x="15" y="191.7" width="8" height="1.6" fill="#d4d4d4" fill-opacity=".62"/>
<rect x="16" y="193.7" width="1" height="1.6" fill="#6a9955" fill-opacity=".62"/>
<rect x="18" y="193.7" width="10" height="1.6" fill="#6a9955" fill-opacity=".62"/>
<rect x="29" y="193.7" width="3" height="1.6" fill="#6a9955" fill-opacity=".62"/>
<rect x="33" y="193.7" width="3" height="1.6" fill="#6a9955" fill-opacity=".62"/>
<rect x="37" y="193.7" width="2" height="1.6" fill="#6a9955" fill-opacity=".62"/>
<rect x="40" y="193.7" width="3" height="1.6" fill="#6a9955" fill-opacity=".62"/>
<rect x="44" y="193.7" width="5" height="1.6" fill="#6a9955" fill-opacity=".62"/>
<rect x="8" y="195.5" width="112" height="2" fill="#ff1212" fill-opacity=".42"/>
<rect x="16" y="195.7" width="5" height="1.6" fill="#d4d4d4" fill-opacity=".62"/>
<rect x="21" y="195.7" width="1" height="1.6" fill="#ffd700" fill-opacity=".3"/>
<rect x="22" y="195.7" width="9" height="1.6" fill="#d4d4d4" fill-opacity=".62"/>
<rect x="31" y="195.7" width="1" height="1.6" fill="#da70d6" fill-opacity=".3"/>
<rect x="32" y="195.7" width="1" height="1.6" fill="#b5cea8" fill-opacity=".62"/>
<rect x="33" y="195.7" width="1" height="1.6" fill="#da70d6" fill-opacity=".3"/>
<rect x="34" y="195.7" width="10" height="1.6" fill="#d4d4d4" fill-opacity=".62"/>
<rect x="44" y="195.7" width="1" height="1.6" fill="#da70d6" fill-opacity=".3"/>
<rect x="45" y="195.7" width="1" height="1.6" fill="#b5cea8" fill-opacity=".62"/>
<rect x="46" y="195.7" width="1" height="1.6" fill="#da70d6" fill-opacity=".3"/>
<rect x="47" y="195.7" width="10" height="1.6" fill="#d4d4d4" fill-opacity=".62"/>
<rect x="57" y="195.7" width="1" height="1.6" fill="#da70d6" fill-opacity=".3"/>
<rect x="58" y="195.7" width="1" height="1.6" fill="#b5cea8" fill-opacity=".62"/>
<rect x="59" y="195.7" width="1" height="1.6" fill="#da70d6" fill-opacity=".3"/>
<rect x="60" y="195.7" width="10" height="1.6" fill="#d4d4d4" fill-opacity=".62"/>
<rect x="70" y="195.7" width="1" height="1.6" fill="#da70d6" fill-opacity=".3"/>
<rect x="71" y="195.7" width="1" height="1.6" fill="#b5cea8" fill-opacity=".62"/>
<rect x="72" y="195.7" width="1" height="1.6" fill="#da70d6" fill-opacity=".3"/>
<rect x="73" y="195.7" width="1" height="1.6" fill="#ffd700" fill-opacity=".3"/>
<rect x="75" y="195.7" width="1" height="1.6" fill="#d4d4d4" fill-opacity=".62"/>
<rect x="77" y="195.5" width="3" height="2" fill="#ff1e1e"/>
<rect x="80" y="195.7" width="12" height="1.6" fill="#d4d4d4" fill-opacity=".62"/>
<rect x="92" y="195.7" width="1" height="1.6" fill="#ffd700" fill-opacity=".3"/>
<rect x="93" y="195.7" width="5" height="1.6" fill="#d4d4d4" fill-opacity=".62"/>
<rect x="98" y="195.7" width="1" height="1.6" fill="#da70d6" fill-opacity=".3"/>
<rect x="99" y="195.7" width="9" height="1.6" fill="#d4d4d4" fill-opacity=".62"/>
<rect x="108" y="195.7" width="1" height="1.6" fill="#87cefa" fill-opacity=".3"/>
<rect x="109" y="195.7" width="1" height="1.6" fill="#b5cea8" fill-opacity=".62"/>
<rect x="110" y="195.7" width="1" height="1.6" fill="#87cefa" fill-opacity=".3"/>
<rect x="111" y="195.7" width="9" height="1.6" fill="#d4d4d4" fill-opacity=".62"/>
<rect x="8" y="197.5" width="112" height="2" fill="#ff1212" fill-opacity=".42"/>
<rect x="16" y="197.7" width="5" height="1.6" fill="#d4d4d4" fill-opacity=".62"/>
<rect x="21" y="197.7" width="1" height="1.6" fill="#ffd700" fill-opacity=".3"/>
<rect x="22" y="197.7" width="8" height="1.6" fill="#d4d4d4" fill-opacity=".62"/>
<rect x="30" y="197.7" width="1" height="1.6" fill="#da70d6" fill-opacity=".3"/>
<rect x="31" y="197.7" width="1" height="1.6" fill="#b5cea8" fill-opacity=".62"/>
<rect x="32" y="197.7" width="1" height="1.6" fill="#da70d6" fill-opacity=".3"/>
<rect x="33" y="197.7" width="9" height="1.6" fill="#d4d4d4" fill-opacity=".62"/>
<rect x="42" y="197.7" width="1" height="1.6" fill="#da70d6" fill-opacity=".3"/>
<rect x="43" y="197.7" width="1" height="1.6" fill="#b5cea8" fill-opacity=".62"/>
<rect x="44" y="197.7" width="1" height="1.6" fill="#da70d6" fill-opacity=".3"/>
<rect x="45" y="197.7" width="9" height="1.6" fill="#d4d4d4" fill-opacity=".62"/>
<rect x="54" y="197.7" width="1" height="1.6" fill="#da70d6" fill-opacity=".3"/>
<rect x="55" y="197.7" width="1" height="1.6" fill="#b5cea8" fill-opacity=".62"/>
<rect x="56" y="197.7" width="1" height="1.6" fill="#da70d6" fill-opacity=".3"/>
<rect x="57" y="197.7" width="9" height="1.6" fill="#d4d4d4" fill-opacity=".62"/>
<rect x="66" y="197.7" width="1" height="1.6" fill="#da70d6" fill-opacity=".3"/>
<rect x="67" y="197.7" width="1" height="1.6" fill="#b5cea8" fill-opacity=".62"/>
<rect x="68" y="197.7" width="1" height="1.6" fill="#da70d6" fill-opacity=".3"/>
<rect x="69" y="197.7" width="1" height="1.6" fill="#ffd700" fill-opacity=".3"/>
<rect x="71" y="197.7" width="1" height="1.6" fill="#d4d4d4" fill-opacity=".62"/>
<rect x="73" y="197.5" width="3" height="2" fill="#ff1e1e"/>
<rect x="76" y="197.7" width="12" height="1.6" fill="#d4d4d4" fill-opacity=".62"/>
<rect x="88" y="197.7" width="1" height="1.6" fill="#ffd700" fill-opacity=".3"/>
<rect x="89" y="197.7" width="5" height="1.6" fill="#d4d4d4" fill-opacity=".62"/>
<rect x="94" y="197.7" width="1" height="1.6" fill="#da70d6" fill-opacity=".3"/>
<rect x="95" y="197.7" width="8" height="1.6" fill="#d4d4d4" fill-opacity=".62"/>
<rect x="103" y="197.7" width="1" height="1.6" fill="#87cefa" fill-opacity=".3"/>
<rect x="104" y="197.7" width="1" height="1.6" fill="#b5cea8" fill-opacity=".62"/>
<rect x="105" y="197.7" width="1" height="1.6" fill="#87cefa" fill-opacity=".3"/>
<rect x="106" y="197.7" width="9" height="1.6" fill="#d4d4d4" fill-opacity=".62"/>
<rect x="115" y="197.7" width="1" height="1.6" fill="#87cefa" fill-opacity=".3"/>
<rect x="116" y="197.7" width="1" height="1.6" fill="#b5cea8" fill-opacity=".62"/>
<rect x="117" y="197.7" width="1" height="1.6" fill="#87cefa" fill-opacity=".3"/>
<rect x="118" y="197.7" width="2" height="1.6" fill="#d4d4d4" fill-opacity=".62"/>
<rect x="12" y="201.7" width="1" height="1.6" fill="#6a9955" fill-opacity=".62"/>
<rect x="14" y="201.7" width="10" height="1.6" fill="#6a9955" fill-opacity=".62"/>
<rect x="25" y="201.7" width="3" height="1.6" fill="#6a9955" fill-opacity=".62"/>
<rect x="29" y="201.7" width="11" height="1.6" fill="#6a9955" fill-opacity=".62"/>
<rect x="41" y="201.7" width="2" height="1.6" fill="#6a9955" fill-opacity=".62"/>
<rect x="44" y="201.7" width="3" height="1.6" fill="#6a9955" fill-opacity=".62"/>
<rect x="48" y="201.7" width="6" height="1.6" fill="#6a9955" fill-opacity=".62"/>
<rect x="55" y="201.7" width="6" height="1.6" fill="#6a9955" fill-opacity=".62"/>
<rect x="12" y="203.7" width="4" height="1.6" fill="#c586c0" fill-opacity=".62"/>
<rect x="16" y="203.7" width="1" height="1.6" fill="#d4d4d4" fill-opacity=".62"/>
<rect x="16" y="205.7" width="1" height="1.6" fill="#6a9955" fill-opacity=".62"/>
<rect x="18" y="205.7" width="10" height="1.6" fill="#6a9955" fill-opacity=".62"/>
<rect x="29" y="205.7" width="3" height="1.6" fill="#6a9955" fill-opacity=".62"/>
<rect x="33" y="205.7" width="5" height="1.6" fill="#6a9955" fill-opacity=".62"/>
<rect x="39" y="205.7" width="2" height="1.6" fill="#6a9955" fill-opacity=".62"/>
<rect x="42" y="205.7" width="3" height="1.6" fill="#6a9955" fill-opacity=".62"/>
<rect x="46" y="205.7" width="11" height="1.6" fill="#6a9955" fill-opacity=".62"/>
<rect x="58" y="205.7" width="2" height="1.6" fill="#6a9955" fill-opacity=".62"/>
<rect x="61" y="205.7" width="3" height="1.6" fill="#6a9955" fill-opacity=".62"/>
<rect x="65" y="205.7" width="6" height="1.6" fill="#6a9955" fill-opacity=".62"/>
<rect x="8" y="207.5" width="112" height="2" fill="#ff1212" fill-opacity=".42"/>
<rect x="16" y="207.7" width="5" height="1.6" fill="#d4d4d4" fill-opacity=".62"/>
<rect x="21" y="207.7" width="1" height="1.6" fill="#ffd700" fill-opacity=".3"/>
<rect x="22" y="207.7" width="9" height="1.6" fill="#d4d4d4" fill-opacity=".62"/>
<rect x="31" y="207.7" width="1" height="1.6" fill="#da70d6" fill-opacity=".3"/>
<rect x="32" y="207.7" width="1" height="1.6" fill="#b5cea8" fill-opacity=".62"/>
<rect x="33" y="207.7" width="1" height="1.6" fill="#da70d6" fill-opacity=".3"/>
<rect x="34" y="207.7" width="10" height="1.6" fill="#d4d4d4" fill-opacity=".62"/>
<rect x="44" y="207.7" width="1" height="1.6" fill="#da70d6" fill-opacity=".3"/>
<rect x="45" y="207.7" width="1" height="1.6" fill="#b5cea8" fill-opacity=".62"/>
<rect x="46" y="207.7" width="1" height="1.6" fill="#da70d6" fill-opacity=".3"/>
<rect x="47" y="207.7" width="10" height="1.6" fill="#d4d4d4" fill-opacity=".62"/>
<rect x="57" y="207.7" width="1" height="1.6" fill="#da70d6" fill-opacity=".3"/>
<rect x="58" y="207.7" width="1" height="1.6" fill="#b5cea8" fill-opacity=".62"/>
<rect x="59" y="207.7" width="1" height="1.6" fill="#da70d6" fill-opacity=".3"/>
<rect x="60" y="207.7" width="10" height="1.6" fill="#d4d4d4" fill-opacity=".62"/>
<rect x="70" y="207.7" width="1" height="1.6" fill="#da70d6" fill-opacity=".3"/>
<rect x="71" y="207.7" width="1" height="1.6" fill="#b5cea8" fill-opacity=".62"/>
<rect x="72" y="207.7" width="1" height="1.6" fill="#da70d6" fill-opacity=".3"/>
<rect x="73" y="207.7" width="1" height="1.6" fill="#ffd700" fill-opacity=".3"/>
<rect x="75" y="207.7" width="1" height="1.6" fill="#d4d4d4" fill-opacity=".62"/>
<rect x="77" y="207.5" width="3" height="2" fill="#ff1e1e"/>
<rect x="80" y="207.7" width="12" height="1.6" fill="#d4d4d4" fill-opacity=".62"/>
<rect x="92" y="207.7" width="1" height="1.6" fill="#ffd700" fill-opacity=".3"/>
<rect x="93" y="207.7" width="6" height="1.6" fill="#d4d4d4" fill-opacity=".62"/>
<rect x="100" y="207.7" width="1" height="1.6" fill="#b5cea8" fill-opacity=".62"/>
<rect x="101" y="207.7" width="1" height="1.6" fill="#d4d4d4" fill-opacity=".62"/>
<rect x="103" y="207.7" width="5" height="1.6" fill="#d4d4d4" fill-opacity=".62"/>
<rect x="108" y="207.7" width="1" height="1.6" fill="#da70d6" fill-opacity=".3"/>
<rect x="109" y="207.7" width="9" height="1.6" fill="#d4d4d4" fill-opacity=".62"/>
<rect x="118" y="207.7" width="1" height="1.6" fill="#87cefa" fill-opacity=".3"/>
<rect x="119" y="207.7" width="1" height="1.6" fill="#b5cea8" fill-opacity=".62"/>
<rect x="8" y="209.5" width="112" height="2" fill="#ff1212" fill-opacity=".42"/>
<rect x="16" y="209.7" width="5" height="1.6" fill="#d4d4d4" fill-opacity=".62"/>
<rect x="21" y="209.7" width="1" height="1.6" fill="#ffd700" fill-opacity=".3"/>
<rect x="22" y="209.7" width="8" height="1.6" fill="#d4d4d4" fill-opacity=".62"/>
<rect x="30" y="209.7" width="1" height="1.6" fill="#da70d6" fill-opacity=".3"/>
<rect x="31" y="209.7" width="1" height="1.6" fill="#b5cea8" fill-opacity=".62"/>
<rect x="32" y="209.7" width="1" height="1.6" fill="#da70d6" fill-opacity=".3"/>
<rect x="33" y="209.7" width="9" height="1.6" fill="#d4d4d4" fill-opacity=".62"/>
<rect x="42" y="209.7" width="1" height="1.6" fill="#da70d6" fill-opacity=".3"/>
<rect x="43" y="209.7" width="1" height="1.6" fill="#b5cea8" fill-opacity=".62"/>
<rect x="44" y="209.7" width="1" height="1.6" fill="#da70d6" fill-opacity=".3"/>
<rect x="45" y="209.7" width="9" height="1.6" fill="#d4d4d4" fill-opacity=".62"/>
<rect x="54" y="209.7" width="1" height="1.6" fill="#da70d6" fill-opacity=".3"/>
<rect x="55" y="209.7" width="1" height="1.6" fill="#b5cea8" fill-opacity=".62"/>
<rect x="56" y="209.7" width="1" height="1.6" fill="#da70d6" fill-opacity=".3"/>
<rect x="57" y="209.7" width="9" height="1.6" fill="#d4d4d4" fill-opacity=".62"/>
<rect x="66" y="209.7" width="1" height="1.6" fill="#da70d6" fill-opacity=".3"/>
<rect x="67" y="209.7" width="1" height="1.6" fill="#b5cea8" fill-opacity=".62"/>
<rect x="68" y="209.7" width="1" height="1.6" fill="#da70d6" fill-opacity=".3"/>
<rect x="69" y="209.7" width="1" height="1.6" fill="#ffd700" fill-opacity=".3"/>
<rect x="71" y="209.7" width="1" height="1.6" fill="#d4d4d4" fill-opacity=".62"/>
<rect x="73" y="209.5" width="3" height="2" fill="#ff1e1e"/>
<rect x="76" y="209.7" width="12" height="1.6" fill="#d4d4d4" fill-opacity=".62"/>
<rect x="88" y="209.7" width="1" height="1.6" fill="#ffd700" fill-opacity=".3"/>
<rect x="89" y="209.7" width="5" height="1.6" fill="#d4d4d4" fill-opacity=".62"/>
<rect x="95" y="209.7" width="1" height="1.6" fill="#b5cea8" fill-opacity=".62"/>
<rect x="96" y="209.7" width="1" height="1.6" fill="#d4d4d4" fill-opacity=".62"/>
<rect x="98" y="209.7" width="5" height="1.6" fill="#d4d4d4" fill-opacity=".62"/>
<rect x="103" y="209.7" width="1" height="1.6" fill="#da70d6" fill-opacity=".3"/>
<rect x="104" y="209.7" width="8" height="1.6" fill="#d4d4d4" fill-opacity=".62"/>
<rect x="112" y="209.7" width="1" height="1.6" fill="#87cefa" fill-opacity=".3"/>
<rect x="113" y="209.7" width="1" height="1.6" fill="#b5cea8" fill-opacity=".62"/>
<rect x="114" y="209.7" width="1" height="1.6" fill="#87cefa" fill-opacity=".3"/>
<rect x="115" y="209.7" width="5" height="1.6" fill="#d4d4d4" fill-opacity=".62"/>
<rect x="8" y="215.5" width="112" height="2" fill="#ff1212" fill-opacity=".42"/>
<rect x="12" y="215.5" width="3" height="2" fill="#ff1e1e"/>
<rect x="15" y="215.7" width="7" height="1.6" fill="#d4d4d4" fill-opacity=".62"/>
<rect x="22" y="215.7" width="1" height="1.6" fill="#ffd700" fill-opacity=".3"/>
<rect x="23" y="215.7" width="8" height="1.6" fill="#ce9178" fill-opacity=".62"/>
<rect x="31" y="215.7" width="6" height="1.6" fill="#d4d4d4" fill-opacity=".62"/>
<rect x="37" y="215.7" width="1" height="1.6" fill="#ffd700" fill-opacity=".3"/>
<rect x="8" y="217.5" width="112" height="2" fill="#ff1212" fill-opacity=".42"/>
<rect x="12" y="217.7" width="3" height="1.6" fill="#d4d4d4" fill-opacity=".62"/>
<rect x="16" y="217.7" width="1" height="1.6" fill="#d4d4d4" fill-opacity=".62"/>
<rect x="18" y="217.5" width="3" height="2" fill="#ff1e1e"/>
<rect x="21" y="217.7" width="8" height="1.6" fill="#d4d4d4" fill-opacity=".62"/>
<rect x="29" y="217.7" width="1" height="1.6" fill="#ffd700" fill-opacity=".3"/>
<rect x="30" y="217.7" width="1" height="1.6" fill="#b5cea8" fill-opacity=".62"/>
<rect x="31" y="217.7" width="1" height="1.6" fill="#ffd700" fill-opacity=".3"/>
<rect x="33" y="217.7" width="1" height="1.6" fill="#d4d4d4" fill-opacity=".62"/>
<rect x="35" y="217.7" width="4" height="1.6" fill="#b5cea8" fill-opacity=".62"/>
<rect x="12" y="219.7" width="1" height="1.6" fill="#6a9955" fill-opacity=".62"/>
<rect x="14" y="219.7" width="2" height="1.6" fill="#6a9955" fill-opacity=".62"/>
<rect x="17" y="219.7" width="3" height="1.6" fill="#6a9955" fill-opacity=".62"/>
<rect x="21" y="219.7" width="3" height="1.6" fill="#6a9955" fill-opacity=".62"/>
<rect x="25" y="219.7" width="3" height="1.6" fill="#6a9955" fill-opacity=".62"/>
<rect x="29" y="219.7" width="2" height="1.6" fill="#6a9955" fill-opacity=".62"/>
<rect x="32" y="219.7" width="8" height="1.6" fill="#6a9955" fill-opacity=".62"/>
<rect x="41" y="219.7" width="4" height="1.6" fill="#6a9955" fill-opacity=".62"/>
<rect x="46" y="219.7" width="3" height="1.6" fill="#6a9955" fill-opacity=".62"/>
<rect x="50" y="219.7" width="4" height="1.6" fill="#6a9955" fill-opacity=".62"/>
<rect x="12" y="221.7" width="2" height="1.6" fill="#c586c0" fill-opacity=".62"/>
<rect x="15" y="221.7" width="3" height="1.6" fill="#d4d4d4" fill-opacity=".62"/>
<rect x="19" y="221.7" width="2" height="1.6" fill="#d4d4d4" fill-opacity=".62"/>
<rect x="22" y="221.7" width="3" height="1.6" fill="#d4d4d4" fill-opacity=".62"/>
<rect x="25" y="221.7" width="1" height="1.6" fill="#ffd700" fill-opacity=".3"/>
<rect x="26" y="221.7" width="3" height="1.6" fill="#ce9178" fill-opacity=".62"/>
<rect x="29" y="221.7" width="1" height="1.6" fill="#ffd700" fill-opacity=".3"/>
<rect x="30" y="221.7" width="1" height="1.6" fill="#d4d4d4" fill-opacity=".62"/>
<rect x="16" y="223.7" width="5" height="1.6" fill="#c586c0" fill-opacity=".62"/>
<rect x="8" y="227.7" width="1" height="1.6" fill="#6a9955" fill-opacity=".62"/>
<rect x="10" y="227.7" width="7" height="1.6" fill="#6a9955" fill-opacity=".62"/>
<rect x="18" y="227.7" width="3" height="1.6" fill="#6a9955" fill-opacity=".62"/>
<rect x="22" y="227.7" width="6" height="1.6" fill="#6a9955" fill-opacity=".62"/>
<rect x="29" y="227.7" width="3" height="1.6" fill="#6a9955" fill-opacity=".62"/>
<rect x="33" y="227.7" width="5" height="1.6" fill="#6a9955" fill-opacity=".62"/>
<rect x="39" y="227.7" width="3" height="1.6" fill="#6a9955" fill-opacity=".62"/>
<rect x="43" y="227.7" width="4" height="1.6" fill="#6a9955" fill-opacity=".62"/>
<rect x="48" y="227.7" width="7" height="1.6" fill="#6a9955" fill-opacity=".62"/>
<rect x="8" y="229.7" width="14" height="1.6" fill="#d4d4d4" fill-opacity=".62"/>
<rect x="22" y="229.7" width="2" height="1.6" fill="#ffd700" fill-opacity=".3"/>
<rect x="8" y="231.5" width="112" height="2" fill="#ff1212" fill-opacity=".42"/>
<rect x="8" y="231.5" width="3" height="2" fill="#ff1e1e"/>
<rect x="11" y="231.7" width="18" height="1.6" fill="#d4d4d4" fill-opacity=".62"/>
<rect x="29" y="231.7" width="2" height="1.6" fill="#ffd700" fill-opacity=".3"/>
</svg>
<div class="abs" style="left:1827px;top:0;width:21px;height:856px;background:#1e1e1e;border-left:1px solid #3a3a3a"></div><div class="abs" style="left:1827px;top:0;width:21px;height:1px;background:#303030"></div><div class="abs" style="left:1828px;top:22px;width:20px;height:3px;background:#a0a0a0"></div><div class="abs" style="left:1842px;top:133px;width:6px;height:8px;background:#bc1616"></div><div class="abs" style="left:1842px;top:145px;width:6px;height:8px;background:#bc1616"></div><div class="abs" style="left:1842px;top:291px;width:6px;height:8px;background:#bc1616"></div><div class="abs" style="left:1842px;top:334px;width:6px;height:11px;background:#bc1616"></div><div class="abs" style="left:1842px;top:461px;width:6px;height:8px;background:#bc1616"></div><div class="abs" style="left:1842px;top:543px;width:6px;height:8px;background:#bc1616"></div><div class="abs" style="left:1842px;top:574px;width:6px;height:12px;background:#bc1616"></div><div class="abs" style="left:1842px;top:609px;width:6px;height:12px;background:#bc1616"></div><div class="abs" style="left:1842px;top:632px;width:6px;height:12px;background:#bc1616"></div><div class="abs" style="left:1842px;top:678px;width:6px;height:8px;background:#bc1616"></div><div class="abs" style="left:1827px;top:174px;width:21px;height:175px;background:rgba(121,121,121,.4);border-left:1px solid rgba(140,140,140,.35)"></div>
<div id="shadow"></div>
</div>
<!-- ================= STATUS BAR ================= -->
<div id="status">
<span class="t" style="left:22.8px;top:7.5px;font-size:18px;color:#fff;transform:scaleX(0.9948);">Python 3.8.3 32-bit</span><svg class="abs" style="left:197.500px;top:6.200px" width="20" height="20" viewBox="0 0 20 20" fill="none" stroke="#fff" stroke-width="1.500"><circle cx="10" cy="10" r="8.700"/><path d="M6.300 6.300l7.400 7.400M13.700 6.300l-7.400 7.400"/></svg><span class="t" style="left:223.7px;top:7.5px;font-size:18px;color:#fff;transform:scaleX(0.9051);">19</span><svg class="abs" style="left:247.500px;top:6px" width="20" height="20" viewBox="0 0 20 20" fill="none" stroke="#fff" stroke-width="1.500" stroke-linejoin="round"><path d="M10 1.800L18.800 18H1.200z"/><path d="M10 7.500v6" stroke-width="1.800"/><path d="M10 14.800v1.800" stroke-width="1.800"/></svg><span class="t" style="left:272.8px;top:7.5px;font-size:18px;color:#fff;transform:scaleX(0.9815);">0</span><span class="t" style="left:1295.5px;top:7.5px;font-size:18px;color:#fff;transform:scaleX(0.9410);">Ln 5, Col 1</span><span class="t" style="left:1402.8px;top:7.5px;font-size:18px;color:#fff;transform:scaleX(0.9132);">Tab Size: 4</span><span class="t" style="left:1508.8px;top:7.5px;font-size:18px;color:#fff;transform:scaleX(0.9280);">UTF-8</span><span class="t" style="left:1579.5px;top:7.5px;font-size:18px;color:#fff;transform:scaleX(0.8493);">CRLF</span><span class="t" style="left:1643.5px;top:7.5px;font-size:18px;color:#fff;transform:scaleX(0.9801);">Python</span><span class="t" style="left:1748.8px;top:7.5px;font-size:18px;color:#fff;transform:scaleX(0.9353);">Go Live</span><svg class="abs" style="left:1724px;top:6.500px" width="19" height="20" viewBox="0 0 19 20" fill="none" stroke="#fff" stroke-width="1.500" stroke-linecap="round"><path d="M5.600 15.300a7.600 7.600 0 1 1 7.800 0"/><path d="M7 12a4 4 0 1 1 5 0" stroke-width="1.300"/><path d="M9.500 9.300v9.200" stroke-width="3" stroke-linecap="round"/></svg><svg class="abs" style="left:1832px;top:6px" width="21" height="21" viewBox="0 0 21 21" fill="none" stroke="#fff" stroke-width="1.400"><path d="M5.500 6.500V1.500h14v9.500h-3.200l-2.300 2.300"/><circle cx="7.500" cy="10.800" r="3.700"/><path d="M1.200 20c.4-3.500 3-5.600 6.300-5.600s5.900 2.100 6.300 5.600"/></svg><svg class="abs" style="left:1877px;top:6px" width="20" height="21" viewBox="0 0 20 21" fill="none" stroke="#fff" stroke-width="1.500" stroke-linejoin="round"><path d="M2.600 16.500h14.800l-1.900-2.800V8.300a5.500 5.500 0 0 0-11 0v5.400z"/><path d="M8.200 17a1.800 1.800 0 0 0 3.600 0"/></svg>
</div>
<!-- ================= TASKBAR ================= -->
<div id="taskbar">
<div class="abs" style="left:0;top:0;width:1920px;height:1px;background:#e6e0dc"></div><svg class="abs" style="left:23.700px;top:17.5px" width="24.300" height="24.300" viewBox="0 0 25 25" fill="#000"><path d="M0 3.600L10.200 2.200V11.900H0zM11.400 2L25 0V11.900H11.400zM0 13.100h10.200v9.700L0 21.400zM11.400 13.100H25V25L11.400 23z"/></svg><div class="abs" style="left:73px;top:1px;width:514px;height:58px;background:#c6c6c6"></div><div class="abs" style="left:74px;top:2px;width:512px;height:56px;background:#fff"></div><svg class="abs" style="left:89px;top:17px" width="27" height="26" viewBox="0 0 27 26" fill="none" stroke="#111" stroke-width="1.700"><circle cx="16.600" cy="9" r="7.700"/><path d="M11.200 14.600L1.300 24.600"/></svg><span class="t" style="left:132.0px;top:20.6px;font-size:22.5px;color:#222;transform:scaleX(0.9920);">Type here to search</span><div class="abs" style="left:612.300px;top:17.799999999999955px;width:23.500px;height:23.500px;border:3px solid #111;border-radius:50%"></div><svg class="abs" style="left:683px;top:18px" width="26" height="24" viewBox="0 0 26 24" fill="none" stroke="#111" stroke-width="1.250"><rect x="1.200" y="6.700" width="15" height="10.300"/><path d="M1.200 0v3.200h15V0M1.200 23.500v-3.200h15v3.200M23.300 0v6M23.300 11.500v12"/><rect x="21.700" y="7.200" width="3.200" height="3.200" fill="#111" stroke="none"/></svg><svg class="abs" style="left:756px;top:16px" width="34" height="28" viewBox="0 0 34 28"><path d="M1.100 2.400Q1.100 1 2.500 1H13.200Q14 1 14.500 1.600L16.300 3.600V7H1.100z" fill="#e8a80c"/><path d="M1.100 5.200H14.600L16.600 3.400H31.800Q33.100 3.400 33.100 4.700V24.200Q33.100 25.500 31.800 25.500H2.400Q1.100 25.500 1.100 24.200z" fill="#fdd765"/><path d="M6 27.100V16Q6 14.900 7.100 14.900H26Q27.100 14.900 27.100 16V27.100H21.900V20.300H11.900V27.100z" fill="#3a97e6"/><path d="M6 25.500V27.100H11.900V25.500zM21.900 25.500V27.100H27.100V25.500z" fill="#2f86d8"/></svg><svg class="abs" style="left:831px;top:13px" width="34" height="34" viewBox="-17 -17 34 34"><circle r="16.500" fill="#db4437"/><path d="M-14.290 -8.250A16.500 16.500 0 0 0 1.500 16.430L7.200 4.150 0 0z" fill="#0f9d58" transform="rotate(0)"/><path d="M1.500 16.430A16.500 16.500 0 0 0 14.290 -8.250L0 -8.250 0 0 7.200 4.150z" fill="#ffcd40"/><path d="M-14.290-8.250L-7.150 4.120 0 0z" fill="#0f9d58"/><circle r="7.600" fill="#f1f1f1"/><circle r="6" fill="#4285f4"/></svg><div class="abs" style="left:887px;top:0;width:73px;height:60px;background:#eeeeee"></div><svg class="abs" style="left:905px;top:12px" width="36" height="36" viewBox="0 0 100 100"><path d="M74 4 L3 63 Q0 66 3 69 L9 74 Q12 76 15 74 L76 28 Z" fill="#0066b8"/><path d="M74 96 L3 37 Q0 34 3 31 L9 26 Q12 24 15 26 L76 72 Z" fill="#0a84d8"/><path d="M72 3 Q74 0 78 1 L96 10 Q100 12 100 17 V83 Q100 88 96 90 L78 99 Q74 100 72 97 Z" fill="#23a4f0"/></svg><div class="abs" style="left:743px;top:57px;width:61px;height:3px;background:#0078d7"></div><div class="abs" style="left:818px;top:57px;width:61px;height:3px;background:#0078d7"></div><div class="abs" style="left:887px;top:57px;width:73px;height:3px;background:#0078d7"></div><svg class="abs" style="left:1536px;top:24px" width="20" height="12" viewBox="0 0 20 12" fill="none" stroke="#111" stroke-width="1.600"><path d="M1 10.500l9-9 9 9"/></svg><svg class="abs" style="left:1572px;top:20.5px" width="22" height="20" viewBox="0 0 22 20" fill="none" stroke-width="1.500"><path d="M1.800 18.500A16.700 16.700 0 0 1 18.500 1.800" stroke="#8a8a8a" stroke-width="1"/><path d="M6.800 18.500A11.700 11.700 0 0 1 18.500 6.800" stroke="#111"/><path d="M11.800 18.500A6.700 6.700 0 0 1 18.500 11.800" stroke="#111"/><circle cx="18.300" cy="17.800" r="1.600" fill="#111"/></svg><svg class="abs" style="left:1606px;top:20.5px" width="24" height="19" viewBox="0 0 24 19" fill="none" stroke="#111" stroke-width="1.300"><path d="M1 6.300h4.200L10 1.200v16.600L5.200 12.700H1z"/><path d="M13 7a3.500 3.500 0 0 1 0 5"/><path d="M15.800 4.500a7 7 0 0 1 0 10"/><path d="M18.800 2a10.500 10.500 0 0 1 0 15" stroke="#999"/></svg><svg class="abs" style="left:1641px;top:20px" width="26" height="18" viewBox="0 0 26 18" fill="none" stroke="#111" stroke-width="1.300"><rect x="6.500" y="5" width="16.500" height="10.500"/><path d="M23.500 8v4.500" stroke-width="2"/><path d="M3.300 1v3M6.300 1v3M1.800 4.300h6v2.500a3 3 0 0 1-6 0zM4.800 9.800v4.500h2" /><rect x="6.500" y="12" width="3" height="3.500" fill="#111" stroke="none"/></svg><span class="t" style="left:1682.5px;top:21.5px;font-size:18px;color:#111;transform:scaleX(0.8466);">ENG</span><span class="t" style="left:1761.2px;top:7.5px;font-size:18px;color:#111;transform:scaleX(0.9619);">08:34</span><span class="t" style="left:1736.2px;top:35.6px;font-size:18px;color:#111;transform:scaleX(1.0136);">05-12-2020</span><svg class="abs" style="left:1857px;top:17.5px" width="26" height="25" viewBox="0 0 26 25" fill="none" stroke="#111" stroke-width="1.500"><path d="M1.500 1.500h23v17h-7.500l-4 4-4-4H1.500z"/></svg><div class="abs" style="left:1912px;top:0;width:1.500px;height:60px;background:#9c9c9c"></div>
</div>
</body>
</html>
